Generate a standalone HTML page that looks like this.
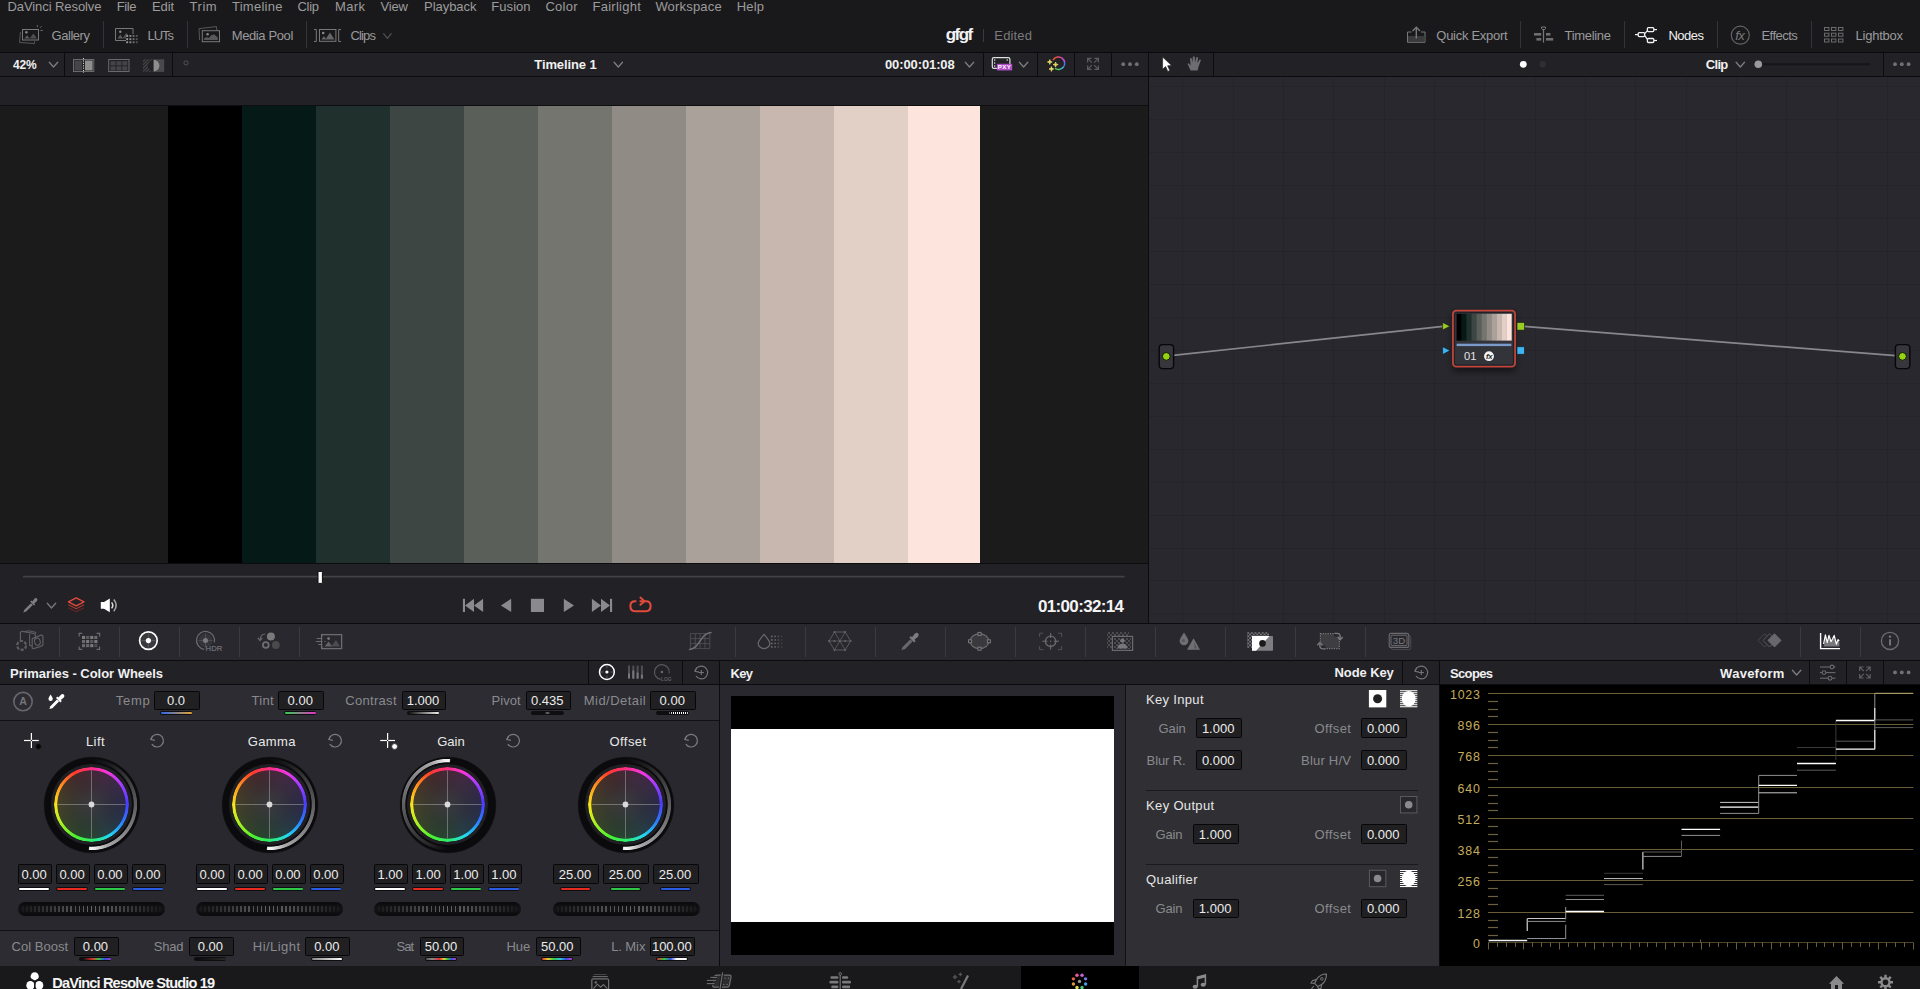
<!DOCTYPE html><html><head><meta charset="utf-8"><title>DaVinci Resolve</title><style>
*{box-sizing:border-box;margin:0;padding:0}
html,body{width:1920px;height:989px;overflow:hidden;background:#28282e}
body{position:relative;font-family:"Liberation Sans",sans-serif;color:#929292;font-size:13px;-webkit-font-smoothing:antialiased}
.abs{position:absolute}
.t{position:absolute;white-space:nowrap;line-height:1}
.w{color:#fff}
.b{font-weight:bold}
svg{position:absolute;overflow:visible}
.vsep{position:absolute;width:1px;background:#3a3a40}
.fld{position:absolute;background:#202022;border:1px solid #070709;border-radius:1.5px;color:#f0f0f0;text-align:center;font-size:13px;line-height:17px;height:19px}
.lbl{position:absolute;white-space:nowrap;color:#8c8c90;font-size:13px;line-height:1}
.bar{position:absolute;height:3px;border-radius:2px}
</style></head><body><div class="abs" style="left:0px;top:0px;width:1920px;height:52px;background:#19191b;"></div><div class="abs" style="left:0px;top:52px;width:1920px;height:1px;background:#0a0a0b;"></div><div class="abs" style="left:0px;top:53px;width:1148px;height:23px;background:#212126;"></div><div class="abs" style="left:0px;top:76px;width:1148px;height:1px;background:#0c0c0e;"></div><div class="abs" style="left:0px;top:77px;width:1148px;height:28px;background:#212126;"></div><div class="abs" style="left:0px;top:105px;width:1148px;height:1px;background:#0e0e10;"></div><div class="abs" style="left:0px;top:106px;width:1148px;height:457px;background:#1b1b1b;"></div><div class="abs" style="left:0px;top:563px;width:1148px;height:1px;background:#0c0c0e;"></div><div class="abs" style="left:0px;top:564px;width:1148px;height:59px;background:#212126;"></div><div class="abs" style="left:1148px;top:53px;width:1px;height:570px;background:#0c0c0e;"></div><div class="abs" style="left:1149px;top:53px;width:771px;height:23px;background:#212126;"></div><div class="abs" style="left:1149px;top:76px;width:771px;height:1px;background:#0c0c0e;"></div><div class="abs" style="left:1149px;top:77px;width:771px;height:546px;background:#28282e;"></div><div class="abs" style="left:0px;top:623px;width:1920px;height:1px;background:#0c0c0e;"></div><div class="abs" style="left:0px;top:624px;width:1920px;height:36px;background:#28282e;"></div><div class="abs" style="left:0px;top:660px;width:1920px;height:1px;background:#0c0c0e;"></div><div class="abs" style="left:0px;top:661px;width:1920px;height:23px;background:#212126;"></div><div class="abs" style="left:0px;top:684px;width:1920px;height:1px;background:#0c0c0e;"></div><div class="abs" style="left:0px;top:966px;width:1920px;height:23px;background:#19191b;"></div><span class="t" style="left:7.50px;top:-0.00px;font-size:13px;color:#9c9c9c;letter-spacing:-0.082px;">DaVinci Resolve</span><span class="t" style="left:116.70px;top:-0.00px;font-size:13px;color:#9c9c9c;letter-spacing:-0.383px;">File</span><span class="t" style="left:152.00px;top:-0.00px;font-size:13px;color:#9c9c9c;letter-spacing:-0.134px;">Edit</span><span class="t" style="left:189.60px;top:-0.00px;font-size:13px;color:#9c9c9c;letter-spacing:0.531px;">Trim</span><span class="t" style="left:231.90px;top:-0.00px;font-size:13px;color:#9c9c9c;letter-spacing:0.279px;">Timeline</span><span class="t" style="left:297.50px;top:-0.00px;font-size:13px;color:#9c9c9c;letter-spacing:-0.299px;">Clip</span><span class="t" style="left:335.00px;top:-0.00px;font-size:13px;color:#9c9c9c;letter-spacing:0.370px;">Mark</span><span class="t" style="left:380.40px;top:-0.00px;font-size:13px;color:#9c9c9c;letter-spacing:-0.115px;">View</span><span class="t" style="left:424.00px;top:-0.00px;font-size:13px;color:#9c9c9c;letter-spacing:-0.036px;">Playback</span><span class="t" style="left:491.30px;top:-0.00px;font-size:13px;color:#9c9c9c;letter-spacing:0.056px;">Fusion</span><span class="t" style="left:545.40px;top:-0.00px;font-size:13px;color:#9c9c9c;letter-spacing:0.258px;">Color</span><span class="t" style="left:592.50px;top:-0.00px;font-size:13px;color:#9c9c9c;letter-spacing:0.257px;">Fairlight</span><span class="t" style="left:655.40px;top:-0.00px;font-size:13px;color:#9c9c9c;letter-spacing:0.189px;">Workspace</span><span class="t" style="left:736.70px;top:-0.00px;font-size:13px;color:#9c9c9c;letter-spacing:0.187px;">Help</span><span class="t" style="left:51.50px;top:29.00px;font-size:13px;color:#9a9a9c;letter-spacing:-0.447px;">Gallery</span><span class="t" style="left:147.50px;top:29.00px;font-size:13px;color:#9a9a9c;letter-spacing:-1.040px;">LUTs</span><span class="t" style="left:231.70px;top:29.00px;font-size:13px;color:#9a9a9c;letter-spacing:-0.383px;">Media Pool</span><span class="t" style="left:350.40px;top:29.00px;font-size:13px;color:#9a9a9c;letter-spacing:-0.824px;">Clips</span><div class="vsep" style="left:103px;top:21px;height:27px;background:#333338"></div><div class="vsep" style="left:187px;top:21px;height:27px;background:#333338"></div><div class="vsep" style="left:306px;top:21px;height:27px;background:#333338"></div><span class="t" style="left:945.70px;top:25.61px;font-size:17px;color:#f2f2f2;font-weight:bold;letter-spacing:-1.498px;">gfgf</span><div class="vsep" style="left:983px;top:29px;height:13px;background:#3a3a3e"></div><span class="t" style="left:994.30px;top:29.00px;font-size:13px;color:#7a7a7c;letter-spacing:0.167px;">Edited</span><span class="t" style="left:1436.30px;top:29.00px;font-size:13px;color:#9a9a9c;letter-spacing:-0.283px;">Quick Export</span><span class="t" style="left:1564.50px;top:29.00px;font-size:13px;color:#9a9a9c;letter-spacing:-0.307px;">Timeline</span><span class="t" style="left:1668.40px;top:29.00px;font-size:13px;color:#f0f0f0;letter-spacing:-0.495px;">Nodes</span><span class="t" style="left:1761.40px;top:29.00px;font-size:13px;color:#9a9a9c;letter-spacing:-0.517px;">Effects</span><span class="t" style="left:1855.50px;top:29.00px;font-size:13px;color:#9a9a9c;letter-spacing:-0.236px;">Lightbox</span><div class="vsep" style="left:1520px;top:21px;height:27px;background:#333338"></div><div class="vsep" style="left:1624px;top:21px;height:27px;background:#333338"></div><div class="vsep" style="left:1717px;top:21px;height:27px;background:#333338"></div><div class="vsep" style="left:1811px;top:21px;height:27px;background:#333338"></div><span class="t" style="left:13.00px;top:58.54px;font-size:12px;color:#f0f0f0;font-weight:bold;letter-spacing:-0.159px;">42%</span><div class="vsep" style="left:64px;top:53px;height:23px;background:#0c0c0e"></div><div class="vsep" style="left:172px;top:53px;height:23px;background:#0c0c0e"></div><span class="t" style="left:534.30px;top:57.70px;font-size:13px;color:#f0f0f0;font-weight:bold;letter-spacing:-0.105px;">Timeline 1</span><span class="t" style="left:885.00px;top:57.70px;font-size:13px;color:#f0f0f0;font-weight:bold;letter-spacing:-0.113px;">00:00:01:08</span><div class="vsep" style="left:983px;top:53px;height:23px;background:#0c0c0e"></div><div class="vsep" style="left:1037px;top:53px;height:23px;background:#0c0c0e"></div><div class="vsep" style="left:1074px;top:53px;height:23px;background:#0c0c0e"></div><div class="vsep" style="left:1111px;top:53px;height:23px;background:#0c0c0e"></div><div class="vsep" style="left:1213px;top:53px;height:23px;background:#0c0c0e"></div><span class="t" style="left:1705.70px;top:57.70px;font-size:13px;color:#f0f0f0;font-weight:bold;letter-spacing:-0.651px;">Clip</span><div class="vsep" style="left:1883px;top:53px;height:23px;background:#0c0c0e"></div><div class="abs" style="left:168px;top:106px;width:74px;height:457px;background:#000000"></div><div class="abs" style="left:242px;top:106px;width:74px;height:457px;background:#051a17"></div><div class="abs" style="left:316px;top:106px;width:74px;height:457px;background:#20302c"></div><div class="abs" style="left:390px;top:106px;width:74px;height:457px;background:#3d4642"></div><div class="abs" style="left:464px;top:106px;width:74px;height:457px;background:#5a5f59"></div><div class="abs" style="left:538px;top:106px;width:74px;height:457px;background:#75756f"></div><div class="abs" style="left:612px;top:106px;width:74px;height:457px;background:#908c85"></div><div class="abs" style="left:686px;top:106px;width:74px;height:457px;background:#aba19b"></div><div class="abs" style="left:760px;top:106px;width:74px;height:457px;background:#c8b7af"></div><div class="abs" style="left:834px;top:106px;width:74px;height:457px;background:#e2d0c7"></div><div class="abs" style="left:908px;top:106px;width:72px;height:457px;background:#fde4dc"></div><span class="t" style="left:1038.00px;top:597.61px;font-size:17px;color:#f4f4f4;font-weight:bold;letter-spacing:-0.663px;">01:00:32:14</span><div class="vsep" style="left:59px;top:627px;height:30px;background:#3a3a40"></div><div class="vsep" style="left:119px;top:627px;height:30px;background:#3a3a40"></div><div class="vsep" style="left:179px;top:627px;height:30px;background:#3a3a40"></div><div class="vsep" style="left:239px;top:627px;height:30px;background:#3a3a40"></div><div class="vsep" style="left:299px;top:627px;height:30px;background:#3a3a40"></div><div class="vsep" style="left:735px;top:627px;height:30px;background:#3a3a40"></div><div class="vsep" style="left:805px;top:627px;height:30px;background:#3a3a40"></div><div class="vsep" style="left:875px;top:627px;height:30px;background:#3a3a40"></div><div class="vsep" style="left:945px;top:627px;height:30px;background:#3a3a40"></div><div class="vsep" style="left:1015px;top:627px;height:30px;background:#3a3a40"></div><div class="vsep" style="left:1085px;top:627px;height:30px;background:#3a3a40"></div><div class="vsep" style="left:1155px;top:627px;height:30px;background:#3a3a40"></div><div class="vsep" style="left:1225px;top:627px;height:30px;background:#3a3a40"></div><div class="vsep" style="left:1295px;top:627px;height:30px;background:#3a3a40"></div><div class="vsep" style="left:1365px;top:627px;height:30px;background:#3a3a40"></div><div class="vsep" style="left:1800px;top:627px;height:30px;background:#3a3a40"></div><div class="vsep" style="left:1860px;top:627px;height:30px;background:#3a3a40"></div><span class="t" style="left:10.00px;top:666.50px;font-size:13px;color:#f0f0f0;font-weight:bold;letter-spacing:-0.038px;">Primaries - Color Wheels</span><div class="vsep" style="left:588px;top:661px;height:23px;background:#0c0c0e"></div><div class="vsep" style="left:682px;top:661px;height:23px;background:#0c0c0e"></div><div class="abs" style="left:719px;top:661px;width:1px;height:305px;background:#0c0c0e;"></div><div class="abs" style="left:1439px;top:661px;width:1px;height:305px;background:#0c0c0e;"></div><div class="abs" style="left:0px;top:685px;width:719px;height:35px;background:#2c2c32;"></div><div class="abs" style="left:0px;top:720px;width:719px;height:1px;background:#111113;"></div><div class="abs" style="left:0px;top:721px;width:719px;height:209px;background:#28282e;"></div><div class="abs" style="left:0px;top:930px;width:719px;height:1px;background:#111113;"></div><div class="abs" style="left:0px;top:931px;width:719px;height:35px;background:#2c2c32;"></div><span class="t" style="left:115.80px;top:693.80px;font-size:13px;color:#8a8a8e;letter-spacing:0.703px;">Temp</span><div class="fld" style="left:154.2px;top:690.6px;width:45.5px;height:19.4px"></div><span class="t" style="left:167.01px;top:694.30px;font-size:13px;color:#ececec;">0.0</span><div class="bar" style="left:159.7px;top:711.4px;width:32.6px;height:3.5px;background:#0e0e10;border-radius:3px"></div><div class="bar" style="left:160.5px;top:712.2px;width:31.0px;height:1.9px;background:linear-gradient(90deg,#2a6ae8,#e8a030)"></div><span class="t" style="left:251.50px;top:693.80px;font-size:13px;color:#8a8a8e;letter-spacing:0.270px;">Tint</span><div class="fld" style="left:278.4px;top:690.6px;width:45.5px;height:19.4px"></div><span class="t" style="left:287.60px;top:694.30px;font-size:13px;color:#ececec;">0.00</span><div class="bar" style="left:283.9px;top:711.4px;width:32.6px;height:3.5px;background:#0e0e10;border-radius:3px"></div><div class="bar" style="left:284.8px;top:712.2px;width:31.0px;height:1.9px;background:linear-gradient(90deg,#30d050,#e830c8)"></div><span class="t" style="left:345.30px;top:693.80px;font-size:13px;color:#8a8a8e;letter-spacing:0.295px;">Contrast</span><div class="fld" style="left:401.5px;top:690.6px;width:44.9px;height:19.4px"></div><span class="t" style="left:406.78px;top:694.30px;font-size:13px;color:#ececec;">1.000</span><div class="bar" style="left:406.8px;top:711.4px;width:32.6px;height:3.5px;background:#0e0e10;border-radius:3px"></div><div class="bar" style="left:407.6px;top:712.2px;width:31.0px;height:1.9px;background:linear-gradient(90deg,#0a0a0a,#f0f0f0)"></div><span class="t" style="left:491.40px;top:693.80px;font-size:13px;color:#8a8a8e;letter-spacing:0.099px;">Pivot</span><div class="fld" style="left:525.7px;top:690.6px;width:44.9px;height:19.4px"></div><span class="t" style="left:530.98px;top:694.30px;font-size:13px;color:#ececec;">0.435</span><div class="bar" style="left:531.0px;top:711.4px;width:32.6px;height:3.5px;background:#0e0e10;border-radius:3px"></div><div class="bar" style="left:531.8px;top:712.2px;width:31.0px;height:1.9px;background:linear-gradient(90deg,#0e0e10 40%,#6a6a6a 50%,#0e0e10 60%)"></div><span class="t" style="left:583.80px;top:693.80px;font-size:13px;color:#8a8a8e;letter-spacing:0.445px;">Mid/Detail</span><div class="fld" style="left:650.3px;top:690.6px;width:45.7px;height:19.4px"></div><span class="t" style="left:659.60px;top:694.30px;font-size:13px;color:#ececec;">0.00</span><div class="bar" style="left:656.0px;top:711.4px;width:32.6px;height:3.5px;background:#0e0e10;border-radius:3px"></div><div class="bar" style="left:656.8px;top:712.2px;width:31.0px;height:1.9px;background:linear-gradient(90deg,#0e0e10 35%,rgba(0,0,0,0) 50%),repeating-linear-gradient(90deg,#fff 0 1px,#0e0e10 1px 2px)"></div><span class="t" style="left:11.60px;top:939.80px;font-size:13px;color:#8a8a8e;letter-spacing:0.030px;">Col Boost</span><div class="fld" style="left:73.9px;top:936.6px;width:44.9px;height:19.4px"></div><span class="t" style="left:82.80px;top:940.30px;font-size:13px;color:#ececec;">0.00</span><div class="bar" style="left:79.4px;top:957.3px;width:32.0px;height:3.5px;background:#0e0e10;border-radius:3px"></div><div class="bar" style="left:80.2px;top:958.1px;width:30.4px;height:1.9px;background:linear-gradient(90deg,#0e0e10 10%,#e03030 40%,#30c848 60%,#3050e0 80%,#a040d8 100%)"></div><span class="t" style="left:153.70px;top:939.80px;font-size:13px;color:#8a8a8e;letter-spacing:-0.154px;">Shad</span><div class="fld" style="left:189.0px;top:936.6px;width:44.5px;height:19.4px"></div><span class="t" style="left:197.70px;top:940.30px;font-size:13px;color:#ececec;">0.00</span><div class="bar" style="left:194.3px;top:957.3px;width:32.0px;height:3.5px;background:#0e0e10;border-radius:3px"></div><div class="bar" style="left:195.2px;top:958.1px;width:30.4px;height:1.9px;background:linear-gradient(90deg,#0a0a0a,#2a2a2a)"></div><span class="t" style="left:252.80px;top:939.80px;font-size:13px;color:#8a8a8e;letter-spacing:0.446px;">Hi/Light</span><div class="fld" style="left:305.4px;top:936.6px;width:44.6px;height:19.4px"></div><span class="t" style="left:314.15px;top:940.30px;font-size:13px;color:#ececec;">0.00</span><div class="bar" style="left:310.8px;top:957.3px;width:32.0px;height:3.5px;background:#0e0e10;border-radius:3px"></div><div class="bar" style="left:311.6px;top:958.1px;width:30.4px;height:1.9px;background:linear-gradient(90deg,#888,#fff)"></div><span class="t" style="left:396.50px;top:939.80px;font-size:13px;color:#8a8a8e;letter-spacing:-0.907px;">Sat</span><div class="fld" style="left:419.8px;top:936.6px;width:44.2px;height:19.4px"></div><span class="t" style="left:424.73px;top:940.30px;font-size:13px;color:#ececec;">50.00</span><div class="bar" style="left:425.0px;top:957.3px;width:32.0px;height:3.5px;background:#0e0e10;border-radius:3px"></div><div class="bar" style="left:425.8px;top:958.1px;width:30.4px;height:1.9px;background:linear-gradient(90deg,#555 0%,#888 20%,#e03030 45%,#e8d030 60%,#30c848 72%,#3050e0 86%,#d040d8 100%)"></div><span class="t" style="left:506.40px;top:939.80px;font-size:13px;color:#8a8a8e;letter-spacing:0.025px;">Hue</span><div class="fld" style="left:535.6px;top:936.6px;width:45.0px;height:19.4px"></div><span class="t" style="left:540.93px;top:940.30px;font-size:13px;color:#ececec;">50.00</span><div class="bar" style="left:541.2px;top:957.3px;width:32.0px;height:3.5px;background:#0e0e10;border-radius:3px"></div><div class="bar" style="left:542.0px;top:958.1px;width:30.4px;height:1.9px;background:linear-gradient(90deg,#e03030,#e8d030,#30c848,#30c8d8,#3050e0,#d040d8)"></div><span class="t" style="left:611.20px;top:939.80px;font-size:13px;color:#8a8a8e;letter-spacing:-0.094px;">L. Mix</span><div class="fld" style="left:650.1px;top:936.6px;width:45.2px;height:19.4px"></div><span class="t" style="left:651.92px;top:940.30px;font-size:13px;color:#ececec;">100.00</span><div class="bar" style="left:655.8px;top:957.3px;width:32.0px;height:3.5px;background:#0e0e10;border-radius:3px"></div><div class="bar" style="left:656.6px;top:958.1px;width:30.4px;height:1.9px;background:linear-gradient(90deg,#e03030 0%,#30c848 25%,#3050e0 45%,#fff 65%,#fff 100%)"></div><div class="abs" style="left:42.50px;top:755.50px;width:98.00px;height:98.00px;border-radius:50%;background:radial-gradient(circle closest-side,#0b0b0d 96.6%,rgba(11,11,13,0) 99.4%);"></div><div class="abs" style="left:45.10px;top:758.10px;width:92.80px;height:92.80px;border-radius:50%;background:conic-gradient(from 0deg,#0b0b0d 0deg,#1c1c1e 25deg,#4a4a4c 70deg,#7a7a7c 120deg,#a8a8aa 160deg,#f4f4f4 178deg,#f4f4f4 182.5deg,#0b0b0d 184deg,#0b0b0d 360deg);-webkit-mask:radial-gradient(circle closest-side,transparent 41.80px,#000 42.60px,#000 45.20px,transparent 46.00px);mask:radial-gradient(circle closest-side,transparent 41.80px,#000 42.60px,#000 45.20px,transparent 46.00px);"></div><div class="abs" style="left:50.90px;top:763.90px;width:81.20px;height:81.20px;border-radius:50%;background:#202024;"></div><div class="abs" style="left:56.90px;top:769.90px;width:69.20px;height:69.20px;border-radius:50%;background:radial-gradient(circle closest-side,#38383c 0%,rgba(50,50,54,0.55) 45%,rgba(40,40,44,0.35) 100%),conic-gradient(from 0deg,#ff2e86 0deg,#f436e0 28deg,#a83cff 55deg,#4a3cff 88deg,#2a7cff 118deg,#22d8f0 150deg,#2cf070 178deg,#48f030 205deg,#a8f020 238deg,#f8e818 268deg,#ff9a1c 298deg,#ff3a2c 332deg,#ff2e86 360deg);"></div><div class="abs" style="left:56.90px;top:769.90px;width:69.20px;height:69.20px;border-radius:50%;background:radial-gradient(circle closest-side,rgba(58,58,62,0.94) 0%,rgba(44,44,48,0.86) 55%,rgba(36,36,40,0.76) 100%);"></div><div class="abs" style="left:53.70px;top:766.70px;width:75.60px;height:75.60px;border-radius:50%;background:conic-gradient(from 0deg,#ff2e86 0deg,#f436e0 28deg,#a83cff 55deg,#4a3cff 88deg,#2a7cff 118deg,#22d8f0 150deg,#2cf070 178deg,#48f030 205deg,#a8f020 238deg,#f8e818 268deg,#ff9a1c 298deg,#ff3a2c 332deg,#ff2e86 360deg);-webkit-mask:radial-gradient(circle closest-side,transparent 33.80px,#000 34.60px,#000 37.30px,transparent 38.10px);mask:radial-gradient(circle closest-side,transparent 33.80px,#000 34.60px,#000 37.30px,transparent 38.10px);"></div><span class="t" style="left:86.00px;top:734.70px;font-size:13px;color:#e8e8e8;letter-spacing:0.386px;">Lift</span><div class="fld" style="left:18.3px;top:864.2px;width:33.5px;height:19.4px"></div><span class="t" style="left:21.50px;top:867.90px;font-size:13px;color:#ececec;">0.00</span><div class="bar" style="left:18.3px;top:887.1px;width:31.4px;height:3.8000000000000003px;background:#0e0e10;border-radius:3px"></div><div class="bar" style="left:19.1px;top:887.9px;width:29.8px;height:2.2px;background:#ffffff"></div><div class="fld" style="left:56.2px;top:864.2px;width:33.5px;height:19.4px"></div><span class="t" style="left:59.40px;top:867.90px;font-size:13px;color:#ececec;">0.00</span><div class="bar" style="left:56.2px;top:887.1px;width:31.4px;height:3.8000000000000003px;background:#0e0e10;border-radius:3px"></div><div class="bar" style="left:57.0px;top:887.9px;width:29.8px;height:2.2px;background:#e62a20"></div><div class="fld" style="left:94.1px;top:864.2px;width:33.5px;height:19.4px"></div><span class="t" style="left:97.30px;top:867.90px;font-size:13px;color:#ececec;">0.00</span><div class="bar" style="left:94.1px;top:887.1px;width:31.4px;height:3.8000000000000003px;background:#0e0e10;border-radius:3px"></div><div class="bar" style="left:94.9px;top:887.9px;width:29.8px;height:2.2px;background:#2ec848"></div><div class="fld" style="left:132.0px;top:864.2px;width:33.5px;height:19.4px"></div><span class="t" style="left:135.20px;top:867.90px;font-size:13px;color:#ececec;">0.00</span><div class="bar" style="left:132.0px;top:887.1px;width:31.4px;height:3.8000000000000003px;background:#0e0e10;border-radius:3px"></div><div class="bar" style="left:132.8px;top:887.9px;width:29.8px;height:2.2px;background:#2a5ce2"></div><div class="abs" style="left:18.1px;top:902px;width:146.6px;height:13.8px;border-radius:7px;background:linear-gradient(180deg,#0a0a0c,#141416 50%,#0a0a0c)"></div><div class="abs" style="left:22.1px;top:906.2px;width:138.6px;height:5.6px;background:repeating-linear-gradient(90deg,#666668 0 1.7px,transparent 1.7px 4.04px);-webkit-mask:linear-gradient(90deg,rgba(0,0,0,0.08),#000 50%,rgba(0,0,0,0.06));mask:linear-gradient(90deg,rgba(0,0,0,0.08),#000 50%,rgba(0,0,0,0.06))"></div><div class="abs" style="left:220.50px;top:755.50px;width:98.00px;height:98.00px;border-radius:50%;background:radial-gradient(circle closest-side,#0b0b0d 96.6%,rgba(11,11,13,0) 99.4%);"></div><div class="abs" style="left:223.10px;top:758.10px;width:92.80px;height:92.80px;border-radius:50%;background:conic-gradient(from 0deg,#0b0b0d 0deg,#1c1c1e 25deg,#4a4a4c 70deg,#7a7a7c 120deg,#a8a8aa 160deg,#f4f4f4 178deg,#f4f4f4 182.5deg,#0b0b0d 184deg,#0b0b0d 360deg);-webkit-mask:radial-gradient(circle closest-side,transparent 41.80px,#000 42.60px,#000 45.20px,transparent 46.00px);mask:radial-gradient(circle closest-side,transparent 41.80px,#000 42.60px,#000 45.20px,transparent 46.00px);"></div><div class="abs" style="left:228.90px;top:763.90px;width:81.20px;height:81.20px;border-radius:50%;background:#202024;"></div><div class="abs" style="left:234.90px;top:769.90px;width:69.20px;height:69.20px;border-radius:50%;background:radial-gradient(circle closest-side,#38383c 0%,rgba(50,50,54,0.55) 45%,rgba(40,40,44,0.35) 100%),conic-gradient(from 0deg,#ff2e86 0deg,#f436e0 28deg,#a83cff 55deg,#4a3cff 88deg,#2a7cff 118deg,#22d8f0 150deg,#2cf070 178deg,#48f030 205deg,#a8f020 238deg,#f8e818 268deg,#ff9a1c 298deg,#ff3a2c 332deg,#ff2e86 360deg);"></div><div class="abs" style="left:234.90px;top:769.90px;width:69.20px;height:69.20px;border-radius:50%;background:radial-gradient(circle closest-side,rgba(58,58,62,0.94) 0%,rgba(44,44,48,0.86) 55%,rgba(36,36,40,0.76) 100%);"></div><div class="abs" style="left:231.70px;top:766.70px;width:75.60px;height:75.60px;border-radius:50%;background:conic-gradient(from 0deg,#ff2e86 0deg,#f436e0 28deg,#a83cff 55deg,#4a3cff 88deg,#2a7cff 118deg,#22d8f0 150deg,#2cf070 178deg,#48f030 205deg,#a8f020 238deg,#f8e818 268deg,#ff9a1c 298deg,#ff3a2c 332deg,#ff2e86 360deg);-webkit-mask:radial-gradient(circle closest-side,transparent 33.80px,#000 34.60px,#000 37.30px,transparent 38.10px);mask:radial-gradient(circle closest-side,transparent 33.80px,#000 34.60px,#000 37.30px,transparent 38.10px);"></div><span class="t" style="left:247.80px;top:734.70px;font-size:13px;color:#e8e8e8;letter-spacing:0.342px;">Gamma</span><div class="fld" style="left:196.3px;top:864.2px;width:33.5px;height:19.4px"></div><span class="t" style="left:199.50px;top:867.90px;font-size:13px;color:#ececec;">0.00</span><div class="bar" style="left:196.3px;top:887.1px;width:31.4px;height:3.8000000000000003px;background:#0e0e10;border-radius:3px"></div><div class="bar" style="left:197.1px;top:887.9px;width:29.8px;height:2.2px;background:#ffffff"></div><div class="fld" style="left:234.2px;top:864.2px;width:33.5px;height:19.4px"></div><span class="t" style="left:237.40px;top:867.90px;font-size:13px;color:#ececec;">0.00</span><div class="bar" style="left:234.2px;top:887.1px;width:31.4px;height:3.8000000000000003px;background:#0e0e10;border-radius:3px"></div><div class="bar" style="left:235.0px;top:887.9px;width:29.8px;height:2.2px;background:#e62a20"></div><div class="fld" style="left:272.1px;top:864.2px;width:33.5px;height:19.4px"></div><span class="t" style="left:275.30px;top:867.90px;font-size:13px;color:#ececec;">0.00</span><div class="bar" style="left:272.1px;top:887.1px;width:31.4px;height:3.8000000000000003px;background:#0e0e10;border-radius:3px"></div><div class="bar" style="left:272.9px;top:887.9px;width:29.8px;height:2.2px;background:#2ec848"></div><div class="fld" style="left:310.0px;top:864.2px;width:33.5px;height:19.4px"></div><span class="t" style="left:313.20px;top:867.90px;font-size:13px;color:#ececec;">0.00</span><div class="bar" style="left:310.0px;top:887.1px;width:31.4px;height:3.8000000000000003px;background:#0e0e10;border-radius:3px"></div><div class="bar" style="left:310.8px;top:887.9px;width:29.8px;height:2.2px;background:#2a5ce2"></div><div class="abs" style="left:196.1px;top:902px;width:146.6px;height:13.8px;border-radius:7px;background:linear-gradient(180deg,#0a0a0c,#141416 50%,#0a0a0c)"></div><div class="abs" style="left:200.1px;top:906.2px;width:138.6px;height:5.6px;background:repeating-linear-gradient(90deg,#666668 0 1.7px,transparent 1.7px 4.04px);-webkit-mask:linear-gradient(90deg,rgba(0,0,0,0.08),#000 50%,rgba(0,0,0,0.06));mask:linear-gradient(90deg,rgba(0,0,0,0.08),#000 50%,rgba(0,0,0,0.06))"></div><div class="abs" style="left:398.50px;top:755.50px;width:98.00px;height:98.00px;border-radius:50%;background:radial-gradient(circle closest-side,#0b0b0d 96.6%,rgba(11,11,13,0) 99.4%);"></div><div class="abs" style="left:401.10px;top:758.10px;width:92.80px;height:92.80px;border-radius:50%;background:conic-gradient(from 180deg,#0b0b0d 0deg,#262628 25deg,#4e4e50 70deg,#7a7a7c 120deg,#a8a8aa 160deg,#f4f4f4 178deg,#f4f4f4 182.5deg,#0b0b0d 184deg,#0b0b0d 360deg);-webkit-mask:radial-gradient(circle closest-side,transparent 41.80px,#000 42.60px,#000 45.20px,transparent 46.00px);mask:radial-gradient(circle closest-side,transparent 41.80px,#000 42.60px,#000 45.20px,transparent 46.00px);"></div><div class="abs" style="left:406.90px;top:763.90px;width:81.20px;height:81.20px;border-radius:50%;background:#202024;"></div><div class="abs" style="left:412.90px;top:769.90px;width:69.20px;height:69.20px;border-radius:50%;background:radial-gradient(circle closest-side,#38383c 0%,rgba(50,50,54,0.55) 45%,rgba(40,40,44,0.35) 100%),conic-gradient(from 0deg,#ff2e86 0deg,#f436e0 28deg,#a83cff 55deg,#4a3cff 88deg,#2a7cff 118deg,#22d8f0 150deg,#2cf070 178deg,#48f030 205deg,#a8f020 238deg,#f8e818 268deg,#ff9a1c 298deg,#ff3a2c 332deg,#ff2e86 360deg);"></div><div class="abs" style="left:412.90px;top:769.90px;width:69.20px;height:69.20px;border-radius:50%;background:radial-gradient(circle closest-side,rgba(58,58,62,0.94) 0%,rgba(44,44,48,0.86) 55%,rgba(36,36,40,0.76) 100%);"></div><div class="abs" style="left:409.70px;top:766.70px;width:75.60px;height:75.60px;border-radius:50%;background:conic-gradient(from 0deg,#ff2e86 0deg,#f436e0 28deg,#a83cff 55deg,#4a3cff 88deg,#2a7cff 118deg,#22d8f0 150deg,#2cf070 178deg,#48f030 205deg,#a8f020 238deg,#f8e818 268deg,#ff9a1c 298deg,#ff3a2c 332deg,#ff2e86 360deg);-webkit-mask:radial-gradient(circle closest-side,transparent 33.80px,#000 34.60px,#000 37.30px,transparent 38.10px);mask:radial-gradient(circle closest-side,transparent 33.80px,#000 34.60px,#000 37.30px,transparent 38.10px);"></div><span class="t" style="left:437.20px;top:734.70px;font-size:13px;color:#e8e8e8;letter-spacing:0.046px;">Gain</span><div class="fld" style="left:374.3px;top:864.2px;width:33.5px;height:19.4px"></div><span class="t" style="left:377.50px;top:867.90px;font-size:13px;color:#ececec;">1.00</span><div class="bar" style="left:374.3px;top:887.1px;width:31.4px;height:3.8000000000000003px;background:#0e0e10;border-radius:3px"></div><div class="bar" style="left:375.1px;top:887.9px;width:29.8px;height:2.2px;background:#ffffff"></div><div class="fld" style="left:412.2px;top:864.2px;width:33.5px;height:19.4px"></div><span class="t" style="left:415.40px;top:867.90px;font-size:13px;color:#ececec;">1.00</span><div class="bar" style="left:412.2px;top:887.1px;width:31.4px;height:3.8000000000000003px;background:#0e0e10;border-radius:3px"></div><div class="bar" style="left:413.0px;top:887.9px;width:29.8px;height:2.2px;background:#e62a20"></div><div class="fld" style="left:450.1px;top:864.2px;width:33.5px;height:19.4px"></div><span class="t" style="left:453.30px;top:867.90px;font-size:13px;color:#ececec;">1.00</span><div class="bar" style="left:450.1px;top:887.1px;width:31.4px;height:3.8000000000000003px;background:#0e0e10;border-radius:3px"></div><div class="bar" style="left:450.9px;top:887.9px;width:29.8px;height:2.2px;background:#2ec848"></div><div class="fld" style="left:488.0px;top:864.2px;width:33.5px;height:19.4px"></div><span class="t" style="left:491.20px;top:867.90px;font-size:13px;color:#ececec;">1.00</span><div class="bar" style="left:488.0px;top:887.1px;width:31.4px;height:3.8000000000000003px;background:#0e0e10;border-radius:3px"></div><div class="bar" style="left:488.8px;top:887.9px;width:29.8px;height:2.2px;background:#2a5ce2"></div><div class="abs" style="left:374.1px;top:902px;width:146.6px;height:13.8px;border-radius:7px;background:linear-gradient(180deg,#0a0a0c,#141416 50%,#0a0a0c)"></div><div class="abs" style="left:378.1px;top:906.2px;width:138.6px;height:5.6px;background:repeating-linear-gradient(90deg,#666668 0 1.7px,transparent 1.7px 4.04px);-webkit-mask:linear-gradient(90deg,rgba(0,0,0,0.08),#000 50%,rgba(0,0,0,0.06));mask:linear-gradient(90deg,rgba(0,0,0,0.08),#000 50%,rgba(0,0,0,0.06))"></div><div class="abs" style="left:576.50px;top:755.50px;width:98.00px;height:98.00px;border-radius:50%;background:radial-gradient(circle closest-side,#0b0b0d 96.6%,rgba(11,11,13,0) 99.4%);"></div><div class="abs" style="left:579.10px;top:758.10px;width:92.80px;height:92.80px;border-radius:50%;background:conic-gradient(from 0deg,#0b0b0d 0deg,#1c1c1e 25deg,#4a4a4c 70deg,#7a7a7c 120deg,#a8a8aa 160deg,#f4f4f4 178deg,#f4f4f4 182.5deg,#0b0b0d 184deg,#0b0b0d 360deg);-webkit-mask:radial-gradient(circle closest-side,transparent 41.80px,#000 42.60px,#000 45.20px,transparent 46.00px);mask:radial-gradient(circle closest-side,transparent 41.80px,#000 42.60px,#000 45.20px,transparent 46.00px);"></div><div class="abs" style="left:584.90px;top:763.90px;width:81.20px;height:81.20px;border-radius:50%;background:#202024;"></div><div class="abs" style="left:590.90px;top:769.90px;width:69.20px;height:69.20px;border-radius:50%;background:radial-gradient(circle closest-side,#38383c 0%,rgba(50,50,54,0.55) 45%,rgba(40,40,44,0.35) 100%),conic-gradient(from 0deg,#ff2e86 0deg,#f436e0 28deg,#a83cff 55deg,#4a3cff 88deg,#2a7cff 118deg,#22d8f0 150deg,#2cf070 178deg,#48f030 205deg,#a8f020 238deg,#f8e818 268deg,#ff9a1c 298deg,#ff3a2c 332deg,#ff2e86 360deg);"></div><div class="abs" style="left:590.90px;top:769.90px;width:69.20px;height:69.20px;border-radius:50%;background:radial-gradient(circle closest-side,rgba(58,58,62,0.94) 0%,rgba(44,44,48,0.86) 55%,rgba(36,36,40,0.76) 100%);"></div><div class="abs" style="left:587.70px;top:766.70px;width:75.60px;height:75.60px;border-radius:50%;background:conic-gradient(from 0deg,#ff2e86 0deg,#f436e0 28deg,#a83cff 55deg,#4a3cff 88deg,#2a7cff 118deg,#22d8f0 150deg,#2cf070 178deg,#48f030 205deg,#a8f020 238deg,#f8e818 268deg,#ff9a1c 298deg,#ff3a2c 332deg,#ff2e86 360deg);-webkit-mask:radial-gradient(circle closest-side,transparent 33.80px,#000 34.60px,#000 37.30px,transparent 38.10px);mask:radial-gradient(circle closest-side,transparent 33.80px,#000 34.60px,#000 37.30px,transparent 38.10px);"></div><span class="t" style="left:609.50px;top:734.70px;font-size:13px;color:#e8e8e8;letter-spacing:0.432px;">Offset</span><div class="fld" style="left:553.3px;top:864.2px;width:45.3px;height:19.4px"></div><span class="t" style="left:558.78px;top:867.90px;font-size:13px;color:#ececec;">25.00</span><div class="bar" style="left:559.7px;top:887.1px;width:31.4px;height:3.8000000000000003px;background:#0e0e10;border-radius:3px"></div><div class="bar" style="left:560.5px;top:887.9px;width:29.8px;height:2.2px;background:#e62a20"></div><div class="fld" style="left:603.3px;top:864.2px;width:45.3px;height:19.4px"></div><span class="t" style="left:608.78px;top:867.90px;font-size:13px;color:#ececec;">25.00</span><div class="bar" style="left:609.7px;top:887.1px;width:31.4px;height:3.8000000000000003px;background:#0e0e10;border-radius:3px"></div><div class="bar" style="left:610.5px;top:887.9px;width:29.8px;height:2.2px;background:#2ec848"></div><div class="fld" style="left:653.3px;top:864.2px;width:45.3px;height:19.4px"></div><span class="t" style="left:658.78px;top:867.90px;font-size:13px;color:#ececec;">25.00</span><div class="bar" style="left:659.7px;top:887.1px;width:31.4px;height:3.8000000000000003px;background:#0e0e10;border-radius:3px"></div><div class="bar" style="left:660.5px;top:887.9px;width:29.8px;height:2.2px;background:#2a5ce2"></div><div class="abs" style="left:553.3px;top:902px;width:146.6px;height:13.8px;border-radius:7px;background:linear-gradient(180deg,#0a0a0c,#141416 50%,#0a0a0c)"></div><div class="abs" style="left:557.3px;top:906.2px;width:138.6px;height:5.6px;background:repeating-linear-gradient(90deg,#666668 0 1.7px,transparent 1.7px 4.04px);-webkit-mask:linear-gradient(90deg,rgba(0,0,0,0.08),#000 50%,rgba(0,0,0,0.06));mask:linear-gradient(90deg,rgba(0,0,0,0.08),#000 50%,rgba(0,0,0,0.06))"></div><span class="t" style="left:730.60px;top:666.50px;font-size:13px;color:#f0f0f0;font-weight:bold;letter-spacing:-0.775px;">Key</span><span class="t" style="left:1334.60px;top:665.70px;font-size:13px;color:#f0f0f0;font-weight:bold;letter-spacing:-0.109px;">Node Key</span><div class="vsep" style="left:1402px;top:661px;height:23px;background:#0c0c0e"></div><div class="abs" style="left:720px;top:685px;width:405px;height:281px;background:#28282e;"></div><div class="abs" style="left:1125px;top:685px;width:1px;height:281px;background:#111113;"></div><div class="abs" style="left:1126px;top:685px;width:313px;height:281px;background:#2f2f34;"></div><div class="abs" style="left:731px;top:696px;width:383px;height:259px;background:#000;"></div><div class="abs" style="left:731px;top:729.3px;width:383px;height:192.4px;background:#fff;"></div><span class="t" style="left:1146.10px;top:692.80px;font-size:13px;color:#e6e6e6;letter-spacing:0.309px;">Key Input</span><span class="t" style="left:1158.60px;top:721.80px;font-size:13px;color:#8a8a8e;letter-spacing:-0.120px;">Gain</span><div class="fld" style="left:1196.2px;top:718.3px;width:45.7px;height:19.4px"></div><span class="t" style="left:1201.88px;top:722.00px;font-size:13px;color:#ececec;">1.000</span><span class="t" style="left:1314.40px;top:721.80px;font-size:13px;color:#8a8a8e;letter-spacing:0.412px;">Offset</span><div class="fld" style="left:1361.2px;top:718.3px;width:45.7px;height:19.4px"></div><span class="t" style="left:1366.88px;top:722.00px;font-size:13px;color:#ececec;">0.000</span><span class="t" style="left:1146.60px;top:753.80px;font-size:13px;color:#8a8a8e;letter-spacing:-0.105px;">Blur R.</span><div class="fld" style="left:1196.2px;top:750.3px;width:45.7px;height:19.4px"></div><span class="t" style="left:1201.88px;top:754.00px;font-size:13px;color:#ececec;">0.000</span><span class="t" style="left:1301.10px;top:753.80px;font-size:13px;color:#8a8a8e;letter-spacing:0.199px;">Blur H/V</span><div class="fld" style="left:1361.2px;top:750.3px;width:45.7px;height:19.4px"></div><span class="t" style="left:1366.88px;top:754.00px;font-size:13px;color:#ececec;">0.000</span><div class="abs" style="left:1146px;top:790px;width:272px;height:1px;background:#1a1a1c;"></div><span class="t" style="left:1146.10px;top:798.70px;font-size:13px;color:#e6e6e6;letter-spacing:0.329px;">Key Output</span><span class="t" style="left:1155.60px;top:827.60px;font-size:13px;color:#8a8a8e;letter-spacing:-0.187px;">Gain</span><div class="fld" style="left:1193.2px;top:824.4px;width:45.6px;height:19.4px"></div><span class="t" style="left:1198.83px;top:828.10px;font-size:13px;color:#ececec;">1.000</span><span class="t" style="left:1314.40px;top:827.60px;font-size:13px;color:#8a8a8e;letter-spacing:0.412px;">Offset</span><div class="fld" style="left:1361.2px;top:824.4px;width:45.7px;height:19.4px"></div><span class="t" style="left:1366.88px;top:828.10px;font-size:13px;color:#ececec;">0.000</span><div class="abs" style="left:1146px;top:864px;width:272px;height:1px;background:#1a1a1c;"></div><span class="t" style="left:1146.10px;top:872.60px;font-size:13px;color:#e6e6e6;letter-spacing:0.374px;">Qualifier</span><span class="t" style="left:1155.60px;top:901.80px;font-size:13px;color:#8a8a8e;letter-spacing:-0.187px;">Gain</span><div class="fld" style="left:1193.2px;top:898.6px;width:45.6px;height:19.4px"></div><span class="t" style="left:1198.83px;top:902.30px;font-size:13px;color:#ececec;">1.000</span><span class="t" style="left:1314.40px;top:901.80px;font-size:13px;color:#8a8a8e;letter-spacing:0.412px;">Offset</span><div class="fld" style="left:1361.2px;top:898.6px;width:45.7px;height:19.4px"></div><span class="t" style="left:1366.88px;top:902.30px;font-size:13px;color:#ececec;">0.000</span><span class="t" style="left:1450.00px;top:666.50px;font-size:13px;color:#f0f0f0;font-weight:bold;letter-spacing:-0.649px;">Scopes</span><span class="t" style="left:1720.10px;top:666.50px;font-size:13px;color:#f0f0f0;font-weight:bold;letter-spacing:0.262px;">Waveform</span><div class="vsep" style="left:1809px;top:661px;height:23px;background:#0c0c0e"></div><div class="vsep" style="left:1846px;top:661px;height:23px;background:#0c0c0e"></div><div class="vsep" style="left:1883px;top:661px;height:23px;background:#0c0c0e"></div><div class="abs" style="left:1440px;top:685px;width:480px;height:281px;background:#000;"></div><span class="t" style="left:1449.94px;top:688.90px;font-size:12.4px;color:#c4ac5c;letter-spacing:0.827px;">1023</span><span class="t" style="left:1457.45px;top:719.90px;font-size:12.4px;color:#c4ac5c;letter-spacing:0.931px;">896</span><span class="t" style="left:1457.45px;top:750.90px;font-size:12.4px;color:#c4ac5c;letter-spacing:0.931px;">768</span><span class="t" style="left:1457.45px;top:782.90px;font-size:12.4px;color:#c4ac5c;letter-spacing:0.931px;">640</span><span class="t" style="left:1457.45px;top:813.90px;font-size:12.4px;color:#c4ac5c;letter-spacing:0.931px;">512</span><span class="t" style="left:1457.45px;top:844.90px;font-size:12.4px;color:#c4ac5c;letter-spacing:0.931px;">384</span><span class="t" style="left:1457.45px;top:875.90px;font-size:12.4px;color:#c4ac5c;letter-spacing:0.931px;">256</span><span class="t" style="left:1457.45px;top:907.90px;font-size:12.4px;color:#c4ac5c;letter-spacing:0.931px;">128</span><span class="t" style="left:1473.11px;top:937.90px;font-size:12.4px;color:#c4ac5c;">0</span><div class="abs" style="left:1021px;top:966px;width:118px;height:23px;background:#000;"></div><span class="t" style="left:52.30px;top:976.04px;font-size:14.6px;color:#f4f4f4;font-weight:bold;letter-spacing:-0.837px;">DaVinci Resolve Studio 19</span><svg width="1920" height="989" viewBox="0 0 1920 989" style="left:0;top:0" font-family="Liberation Sans, sans-serif"><path d="M20.5 32 L19.5 42.5 L34.5 43.5 L34.6 41.2" fill="none" stroke="#565656" stroke-width="1" />
<rect x="22.5" y="29.5" width="16" height="10.5" fill="none" stroke="#787878" stroke-width="1" rx="0" />
<circle cx="26.4" cy="32.3" r="1.2" fill="#8a8a8a" stroke="none" stroke-width="1" />
<path d="M24.3 38.6 L27 35.3 L29.8 38.6 Z" fill="#5c5c5c" stroke="none" stroke-width="0" />
<path d="M29.6 38.6 L33.4 33.6 L37 38.6 Z" fill="#4e4e4e" stroke="none" stroke-width="0" />
<line x1="37.4" y1="25" x2="37.4" y2="27.2" stroke="#6a6a6a" stroke-width="1" />
<line x1="40" y1="27.8" x2="41.6" y2="26.2" stroke="#6a6a6a" stroke-width="1" />
<line x1="40.4" y1="30.5" x2="42.8" y2="30.5" stroke="#6a6a6a" stroke-width="1" />
<path d="M126 40.5 L115.5 40.5 L115.5 28.5 L133 28.5 L133 34" fill="none" stroke="#787878" stroke-width="1" />
<circle cx="120.3" cy="31.8" r="1.2" fill="#8a8a8a" stroke="none" stroke-width="1" />
<path d="M117.6 38.6 L120.3 34.6 L123 38.6 Z" fill="#5c5c5c" stroke="none" stroke-width="0" />
<path d="M122.4 38.6 L126.3 32.8 L128 35 L126 35 L126 38.6Z" fill="#4e4e4e" stroke="none" stroke-width="0" />
<rect x="126.2" y="35" width="1.9" height="1.9" fill="#9a9a9a" rx="0" />
<rect x="129.4" y="35" width="1.9" height="1.9" fill="#8a8a8a" rx="0" />
<rect x="132.6" y="35" width="1.9" height="1.9" fill="#6e6e6e" rx="0" />
<rect x="135.8" y="35" width="1.9" height="1.9" fill="#555" rx="0" />
<rect x="126.2" y="38.2" width="1.9" height="1.9" fill="#9a9a9a" rx="0" />
<rect x="129.4" y="38.2" width="1.9" height="1.9" fill="#8a8a8a" rx="0" />
<rect x="132.6" y="38.2" width="1.9" height="1.9" fill="#6e6e6e" rx="0" />
<rect x="135.8" y="38.2" width="1.9" height="1.9" fill="#555" rx="0" />
<rect x="126.2" y="41.3" width="1.9" height="1.9" fill="#9a9a9a" rx="0" />
<rect x="129.4" y="41.3" width="1.9" height="1.9" fill="#8a8a8a" rx="0" />
<rect x="132.6" y="41.3" width="1.9" height="1.9" fill="#6e6e6e" rx="0" />
<rect x="135.8" y="41.3" width="1.9" height="1.9" fill="#555" rx="0" />
<path d="M199.6 40 L199 28.6 L216.4 26.6 L216.8 30" fill="none" stroke="#565656" stroke-width="1" />
<rect x="202.3" y="30.7" width="17.2" height="11" fill="none" stroke="#787878" stroke-width="1" rx="0" />
<circle cx="207.6" cy="34.3" r="1.2" fill="#8a8a8a" stroke="none" stroke-width="1" />
<path d="M204 40 L204 38.6 Q206.5 36.2 208.8 38 Q212 33.6 214.6 34.8 L217.8 37.6 L217.8 40 Z" fill="#585858" stroke="none" stroke-width="0" />
<path d="M314 29.5 L316.3 29.5 L316.3 41.5 L314 41.5" fill="none" stroke="#787878" stroke-width="1" />
<path d="M341 29.5 L338.7 29.5 L338.7 41.5 L341 41.5" fill="none" stroke="#787878" stroke-width="1" />
<rect x="319.5" y="29.5" width="16.4" height="11.8" fill="none" stroke="#787878" stroke-width="1" rx="0" />
<circle cx="323.2" cy="33" r="1.3" fill="#8a8a8a" stroke="none" stroke-width="1" />
<path d="M321.4 39.6 L324 36 L326.2 39.6 Z" fill="#666" stroke="none" stroke-width="0" />
<path d="M325.4 39.6 L330 32.4 L334.4 39.6 Z" fill="#666" stroke="none" stroke-width="0" />
<path d="M383.59999999999997 33.7 L387.4 38.3 L391.2 33.7" fill="none" stroke="#4e4e50" stroke-width="1.3" stroke-linecap="round" stroke-linejoin="round"/>
<path d="M1411.5 32 L1407.5 32 L1407.5 42.3 L1425 42.3 L1425 32 L1421 32" fill="none" stroke="#787878" stroke-width="1" />
<rect x="1408" y="36" width="16.5" height="6" fill="#3a3a3c" rx="0" />
<line x1="1416.3" y1="28" x2="1416.3" y2="38.5" stroke="#787878" stroke-width="1.4" />
<path d="M1412.6 31 L1416.3 27.3 L1420 31" fill="none" stroke="#787878" stroke-width="1.4" />
<line x1="1543.5" y1="29" x2="1543.5" y2="42.6" stroke="#787878" stroke-width="1.2" />
<path d="M1541.5 27 L1545.5 27 L1545.5 28.6 L1543.5 30.4 L1541.5 28.6 Z" fill="none" stroke="#787878" stroke-width="1" />
<rect x="1534" y="33" width="7.2" height="2.6" fill="#6e6e6e" rx="0" />
<rect x="1546" y="33" width="4.4" height="2.6" fill="#6e6e6e" rx="0" />
<rect x="1536.4" y="38" width="4.8" height="2.6" fill="#6e6e6e" rx="0" />
<rect x="1546" y="38" width="7.2" height="2.6" fill="#6e6e6e" rx="0" />
<rect x="1638.2" y="32.6" width="6.4" height="4" fill="none" stroke="#f2f2f2" stroke-width="1.3" rx="1" />
<rect x="1647.4" y="27.6" width="6.4" height="4" fill="none" stroke="#f2f2f2" stroke-width="1.3" rx="1" />
<rect x="1647.4" y="38.5" width="6.4" height="4" fill="none" stroke="#f2f2f2" stroke-width="1.3" rx="1" />
<line x1="1635" y1="34.6" x2="1638" y2="34.6" stroke="#f2f2f2" stroke-width="1.2" />
<line x1="1654" y1="29.6" x2="1657" y2="29.6" stroke="#f2f2f2" stroke-width="1.2" />
<line x1="1654" y1="40.5" x2="1657" y2="40.5" stroke="#f2f2f2" stroke-width="1.2" />
<path d="M1644.8 33.6 L1647.2 30.8 M1644.8 35.6 L1647.2 39.2" fill="none" stroke="#f2f2f2" stroke-width="1.2" />
<circle cx="1740.3" cy="35.2" r="9" fill="none" stroke="#626264" stroke-width="1.2" />
<text x="1735.2" y="39.6" font-size="13" font-style="italic" fill="#7a7a7c" letter-spacing="-0.6">fx</text>
<rect x="1824.5" y="27.5" width="4.4" height="3" fill="none" stroke="#6c6c6e" stroke-width="1" rx="0" />
<rect x="1831.5" y="27.5" width="4.4" height="3" fill="none" stroke="#6c6c6e" stroke-width="1" rx="0" />
<rect x="1838.5" y="27.5" width="4.4" height="3" fill="none" stroke="#6c6c6e" stroke-width="1" rx="0" />
<rect x="1824.5" y="33.2" width="4.4" height="3" fill="none" stroke="#6c6c6e" stroke-width="1" rx="0" />
<rect x="1831.5" y="33.2" width="4.4" height="3" fill="none" stroke="#6c6c6e" stroke-width="1" rx="0" />
<rect x="1838.5" y="33.2" width="4.4" height="3" fill="none" stroke="#6c6c6e" stroke-width="1" rx="0" />
<rect x="1824.5" y="39" width="4.4" height="3" fill="none" stroke="#6c6c6e" stroke-width="1" rx="0" />
<rect x="1831.5" y="39" width="4.4" height="3" fill="none" stroke="#6c6c6e" stroke-width="1" rx="0" />
<rect x="1838.5" y="39" width="4.4" height="3" fill="none" stroke="#6c6c6e" stroke-width="1" rx="0" />
<path d="M49.3 62.199999999999996 L53.5 67.0 L57.7 62.199999999999996" fill="none" stroke="#7e7e80" stroke-width="1.3" stroke-linecap="round" stroke-linejoin="round"/>
<rect x="74.5" y="60.5" width="7.6" height="10" fill="#454547" rx="0" />
<rect x="85" y="60.5" width="7.6" height="10" fill="#8e8e8e" rx="0" />
<rect x="73.5" y="59.5" width="20.3" height="12" fill="none" stroke="#6a6a6c" stroke-width="1" rx="0" />
<line x1="83.5" y1="58" x2="83.5" y2="73" stroke="#cfcfcf" stroke-width="1" stroke-dasharray="1.2 1.2"/>
<rect x="108.7" y="59.5" width="20.3" height="12" fill="none" stroke="#6a6a6c" stroke-width="1" rx="0" />
<rect x="110.5" y="61.2" width="5" height="4.2" fill="#454547" rx="0" />
<rect x="116.4" y="61.2" width="5" height="4.2" fill="#454547" rx="0" />
<rect x="122.3" y="61.2" width="5" height="4.2" fill="#454547" rx="0" />
<rect x="110.5" y="66.3" width="5" height="4.2" fill="#454547" rx="0" />
<rect x="116.4" y="66.3" width="5" height="4.2" fill="#454547" rx="0" />
<rect x="122.3" y="66.3" width="5" height="4.2" fill="#454547" rx="0" />
<defs><pattern id="hat" width="2.4" height="2.4" patternUnits="userSpaceOnUse" patternTransform="rotate(-45)"><rect width="2.4" height="1.1" fill="#4a4a4c"/></pattern></defs>
<rect x="143" y="59.3" width="10.6" height="12.6" fill="url(#hat)" rx="0" />
<rect x="153.6" y="59.3" width="10.6" height="12.6" fill="#4a4a4c" rx="0" />
<path d="M153.6 59.8 A5.8 5.8 0 0 0 153.6 71.4 Z" fill="#212126" stroke="none" stroke-width="0" />
<path d="M153.6 59.8 A5.8 5.8 0 0 1 153.6 71.4 Z" fill="#8e8e8e" stroke="none" stroke-width="0" />
<circle cx="186" cy="62.9" r="2.1" fill="none" stroke="#505056" stroke-width="1" />
<path d="M614.0999999999999 62.199999999999996 L618.3 67.0 L622.5 62.199999999999996" fill="none" stroke="#7e7e80" stroke-width="1.3" stroke-linecap="round" stroke-linejoin="round"/>
<path d="M965.3 62.199999999999996 L969.5 67.0 L973.7 62.199999999999996" fill="none" stroke="#7e7e80" stroke-width="1.3" stroke-linecap="round" stroke-linejoin="round"/>
<rect x="992.3" y="57.6" width="17.6" height="10.8" fill="none" stroke="#e0e0e0" stroke-width="1.2" rx="1.6" />
<rect x="994" y="59.4" width="1.3" height="1.3" fill="#e0e0e0" rx="0" />
<rect x="994" y="62.4" width="1.3" height="1.3" fill="#e0e0e0" rx="0" />
<rect x="994" y="65.4" width="1.3" height="1.3" fill="#e0e0e0" rx="0" />
<rect x="1006.6" y="59.4" width="1.3" height="1.3" fill="#e0e0e0" rx="0" />
<rect x="996.8" y="63.8" width="15.4" height="6.8" fill="#b04cc6" rx="0.8" />
<text x="1004.5" y="69.4" font-size="6.2" font-weight="bold" fill="#fff" text-anchor="middle" letter-spacing="0.3">PXY</text>
<path d="M1019.4 62.199999999999996 L1023.6 67.0 L1027.8 62.199999999999996" fill="none" stroke="#7e7e80" stroke-width="1.3" stroke-linecap="round" stroke-linejoin="round"/>
<path d="M1052.94 60.05 A6.3 6.3 0 0 1 1057.63 56.95" fill="none" stroke="#e8553a" stroke-width="1.5" />
<path d="M1057.31 57.00 A6.3 6.3 0 0 1 1062.28 58.24" fill="none" stroke="#e84a8a" stroke-width="1.5" />
<path d="M1062.01 58.04 A6.3 6.3 0 0 1 1064.65 62.43" fill="none" stroke="#c050d8" stroke-width="1.5" />
<path d="M1064.60 62.11 A6.3 6.3 0 0 1 1063.36 67.08" fill="none" stroke="#4a78e8" stroke-width="1.5" />
<path d="M1063.56 66.81 A6.3 6.3 0 0 1 1059.17 69.45" fill="none" stroke="#3ac0c8" stroke-width="1.5" />
<path d="M1059.49 69.40 A6.3 6.3 0 0 1 1054.97 68.48" fill="none" stroke="#5ac850" stroke-width="1.5" />
<path d="M1049.8 59.6 Q1049.8 62 1052.2 62 Q1049.8 62 1049.8 64.4 Q1049.8 62 1047.3999999999999 62 Q1049.8 62 1049.8 59.6Z" fill="#ece36c" stroke="#ece36c" stroke-width="0.7" />
<path d="M1055.6 61.99999999999999 Q1055.6 64.6 1058.1999999999998 64.6 Q1055.6 64.6 1055.6 67.19999999999999 Q1055.6 64.6 1053.0 64.6 Q1055.6 64.6 1055.6 61.99999999999999Z" fill="#ece36c" stroke="#ece36c" stroke-width="0.7" />
<path d="M1051.4 66.6 Q1051.4 69 1053.8000000000002 69 Q1051.4 69 1051.4 71.4 Q1051.4 69 1049.0 69 Q1051.4 69 1051.4 66.6Z" fill="#ece36c" stroke="#ece36c" stroke-width="0.7" />
<path d="M1091.6 58.4 L1087.6 58.4 L1087.6 62.4 M1087.6 58.4 L1091.8 62.6" fill="none" stroke="#5c5c60" stroke-width="1.2" />
<path d="M1094.4 58.4 L1098.4 58.4 L1098.4 62.4 M1098.4 58.4 L1094.2 62.6" fill="none" stroke="#5c5c60" stroke-width="1.2" />
<path d="M1091.6 69.4 L1087.6 69.4 L1087.6 65.4 M1087.6 69.4 L1091.8 65.2" fill="none" stroke="#5c5c60" stroke-width="1.2" />
<path d="M1094.4 69.4 L1098.4 69.4 L1098.4 65.4 M1098.4 69.4 L1094.2 65.2" fill="none" stroke="#5c5c60" stroke-width="1.2" />
<circle cx="1123.2" cy="64.2" r="1.9" fill="#727276" stroke="none" stroke-width="1" />
<circle cx="1130" cy="64.2" r="1.9" fill="#727276" stroke="none" stroke-width="1" />
<circle cx="1136.8" cy="64.2" r="1.9" fill="#727276" stroke="none" stroke-width="1" />
<path d="M1162.6 57 L1162.6 69.2 L1165.6 66.6 L1167.8 71.4 L1169.8 70.4 L1167.6 65.8 L1171.6 65.6 Z" fill="#ffffff" stroke="#19191b" stroke-width="0.6" />
<path d="M1190.6 70.4 L1187.8 64.6 Q1187.4 63 1189 63.4 L1190.6 65.4 L1190 58.6 Q1190.8 57.2 1191.8 58.6 L1192.6 62.6 L1192.8 57 Q1193.8 55.6 1194.8 57 L1195 62.6 L1196.2 57.6 Q1197.4 56.4 1198 58 L1197.4 63 L1199.6 59.6 Q1201 59 1200.8 60.6 L1198.6 66.6 L1197.6 70.4 Z" fill="#6e6e70" stroke="none" stroke-width="0" />
<circle cx="1523.3" cy="64.3" r="3.4" fill="#ffffff" stroke="none" stroke-width="1" />
<circle cx="1542.7" cy="64.3" r="3.2" fill="#2e2e33" stroke="none" stroke-width="1" />
<path d="M1736.1 62.199999999999996 L1740.3 67.0 L1744.5 62.199999999999996" fill="none" stroke="#7e7e80" stroke-width="1.3" stroke-linecap="round" stroke-linejoin="round"/>
<line x1="1758" y1="64.3" x2="1870" y2="64.3" stroke="#161618" stroke-width="2" />
<circle cx="1758.3" cy="64.3" r="3.8" fill="#9a9a9a" stroke="none" stroke-width="1" />
<circle cx="1895" cy="64.2" r="1.9" fill="#727276" stroke="none" stroke-width="1" />
<circle cx="1901.8" cy="64.2" r="1.9" fill="#727276" stroke="none" stroke-width="1" />
<circle cx="1908.6" cy="64.2" r="1.9" fill="#727276" stroke="none" stroke-width="1" />
<line x1="1182.5" y1="77" x2="1182.5" y2="623" stroke="#24242a" stroke-width="1" />
<line x1="1233.5" y1="77" x2="1233.5" y2="623" stroke="#24242a" stroke-width="1" />
<line x1="1283.5" y1="77" x2="1283.5" y2="623" stroke="#24242a" stroke-width="1" />
<line x1="1333.5" y1="77" x2="1333.5" y2="623" stroke="#24242a" stroke-width="1" />
<line x1="1384.5" y1="77" x2="1384.5" y2="623" stroke="#24242a" stroke-width="1" />
<line x1="1434.5" y1="77" x2="1434.5" y2="623" stroke="#24242a" stroke-width="1" />
<line x1="1484.5" y1="77" x2="1484.5" y2="623" stroke="#24242a" stroke-width="1" />
<line x1="1535.5" y1="77" x2="1535.5" y2="623" stroke="#24242a" stroke-width="1" />
<line x1="1585.5" y1="77" x2="1585.5" y2="623" stroke="#24242a" stroke-width="1" />
<line x1="1635.5" y1="77" x2="1635.5" y2="623" stroke="#24242a" stroke-width="1" />
<line x1="1686.5" y1="77" x2="1686.5" y2="623" stroke="#24242a" stroke-width="1" />
<line x1="1736.5" y1="77" x2="1736.5" y2="623" stroke="#24242a" stroke-width="1" />
<line x1="1786.5" y1="77" x2="1786.5" y2="623" stroke="#24242a" stroke-width="1" />
<line x1="1837.5" y1="77" x2="1837.5" y2="623" stroke="#24242a" stroke-width="1" />
<line x1="1887.5" y1="77" x2="1887.5" y2="623" stroke="#24242a" stroke-width="1" />
<line x1="1149" y1="86.5" x2="1920" y2="86.5" stroke="#24242a" stroke-width="1" />
<line x1="1149" y1="119.5" x2="1920" y2="119.5" stroke="#24242a" stroke-width="1" />
<line x1="1149" y1="152.5" x2="1920" y2="152.5" stroke="#24242a" stroke-width="1" />
<line x1="1149" y1="185.5" x2="1920" y2="185.5" stroke="#24242a" stroke-width="1" />
<line x1="1149" y1="218.5" x2="1920" y2="218.5" stroke="#24242a" stroke-width="1" />
<line x1="1149" y1="251.5" x2="1920" y2="251.5" stroke="#24242a" stroke-width="1" />
<line x1="1149" y1="284.5" x2="1920" y2="284.5" stroke="#24242a" stroke-width="1" />
<line x1="1149" y1="317.5" x2="1920" y2="317.5" stroke="#24242a" stroke-width="1" />
<line x1="1149" y1="350.5" x2="1920" y2="350.5" stroke="#24242a" stroke-width="1" />
<line x1="1149" y1="383.5" x2="1920" y2="383.5" stroke="#24242a" stroke-width="1" />
<line x1="1149" y1="416.5" x2="1920" y2="416.5" stroke="#24242a" stroke-width="1" />
<line x1="1149" y1="449.5" x2="1920" y2="449.5" stroke="#24242a" stroke-width="1" />
<line x1="1149" y1="482.5" x2="1920" y2="482.5" stroke="#24242a" stroke-width="1" />
<line x1="1149" y1="515.5" x2="1920" y2="515.5" stroke="#24242a" stroke-width="1" />
<line x1="1149" y1="548.5" x2="1920" y2="548.5" stroke="#24242a" stroke-width="1" />
<line x1="1149" y1="580.5" x2="1920" y2="580.5" stroke="#24242a" stroke-width="1" />
<line x1="1149" y1="613.5" x2="1920" y2="613.5" stroke="#24242a" stroke-width="1" />
<line x1="1166" y1="356.2" x2="1443" y2="326.3" stroke="#88888c" stroke-width="1.7" />
<line x1="1524" y1="326.3" x2="1902" y2="356.2" stroke="#88888c" stroke-width="1.7" />
<rect x="1159.2" y="344.6" width="14.4" height="24" fill="#36363c" stroke="#070709" stroke-width="1.4" rx="3.4" />
<rect x="1895.4" y="344.6" width="14.4" height="24" fill="#36363c" stroke="#070709" stroke-width="1.4" rx="3.4" />
<circle cx="1166.3" cy="356.4" r="3.9" fill="#96d214" stroke="#0a1400" stroke-width="1" />
<circle cx="1902.5" cy="356.4" r="3.9" fill="#96d214" stroke="#0a1400" stroke-width="1" />
<defs><filter id="nsh" x="-30%" y="-30%" width="160%" height="170%"><feGaussianBlur stdDeviation="3"/></filter></defs>
<rect x="1452" y="312" width="64" height="60" fill="rgba(0,0,0,0.45)" rx="4" filter="url(#nsh)"/>
<rect x="1452.9" y="310.7" width="62.2" height="56" fill="#33333a" stroke="#c4443a" stroke-width="1.7" rx="3.4" />
<rect x="1454.6" y="312.4" width="58.8" height="52.6" fill="none" stroke="#1c1c20" stroke-width="0.8" rx="2.2" />
<rect x="1456.6" y="313.8" width="5.28" height="26.8" fill="#000000" rx="0" />
<rect x="1461.58" y="313.8" width="5.28" height="26.8" fill="#051a17" rx="0" />
<rect x="1466.56" y="313.8" width="5.28" height="26.8" fill="#20302c" rx="0" />
<rect x="1471.55" y="313.8" width="5.28" height="26.8" fill="#3d4642" rx="0" />
<rect x="1476.53" y="313.8" width="5.28" height="26.8" fill="#5a5f59" rx="0" />
<rect x="1481.51" y="313.8" width="5.28" height="26.8" fill="#75756f" rx="0" />
<rect x="1486.49" y="313.8" width="5.28" height="26.8" fill="#908c85" rx="0" />
<rect x="1491.47" y="313.8" width="5.28" height="26.8" fill="#aba19b" rx="0" />
<rect x="1496.45" y="313.8" width="5.28" height="26.8" fill="#c8b7af" rx="0" />
<rect x="1501.44" y="313.8" width="5.28" height="26.8" fill="#e2d0c7" rx="0" />
<rect x="1506.42" y="313.8" width="5.28" height="26.8" fill="#fde4dc" rx="0" />
<rect x="1456.6" y="343.7" width="54.8" height="2.4" fill="#7a9aca" rx="0" />
<text x="1464" y="359.8" font-size="11.2" fill="#e4e4e4">01</text>
<circle cx="1489" cy="356.2" r="4.9" fill="#f4f4f4" stroke="none" stroke-width="1" />
<text x="1486" y="359.2" font-size="7.6" font-style="italic" font-weight="bold" fill="#222" letter-spacing="-0.4">fx</text>
<path d="M1442.6 322.4 L1450 326.2 L1442.6 330 Z" fill="#98cc1e" stroke="#1a1a1c" stroke-width="0.6" />
<path d="M1442.6 346.7 L1450 350.6 L1442.6 354.6 Z" fill="#3cb6f2" stroke="#1a1a1c" stroke-width="0.6" />
<rect x="1517" y="322.5" width="7.4" height="7.6" fill="#98cc1e" stroke="#1a1a1c" stroke-width="0.6" rx="0" />
<rect x="1517" y="346.8" width="7.4" height="7.4" fill="#3cb6f2" stroke="#1a1a1c" stroke-width="0.6" rx="0" />
<line x1="23" y1="576.7" x2="1124.5" y2="576.7" stroke="#414146" stroke-width="1.8" />
<rect x="318" y="571.4" width="4.4" height="12" fill="#ffffff" stroke="#0c0c0e" stroke-width="1" rx="1" />
<path d="M23.2 612.6 L24.4 609.8 L31 603.2 L32.8 605 L26.2 611.6 Z" fill="#808082" stroke="none" stroke-width="0" />
<path d="M30.2 601.6 L31.4 600.4 L32.4 601.4 L34.6 598.6 Q36 597.4 37 598.6 Q38 599.8 37 601 L34.2 603.4 L35.2 604.4 L34 605.6 Z" fill="#808082" stroke="none" stroke-width="0" />
<path d="M47.3 603.2 L51.5 608.0 L55.7 603.2" fill="none" stroke="#7a7a7c" stroke-width="1.3" stroke-linecap="round" stroke-linejoin="round"/>
<path d="M76.2 597.8 L84 601.8 L76.2 605.8 L68.4 601.8 Z" fill="none" stroke="#e24a3c" stroke-width="1.3" stroke-linejoin="round"/>
<path d="M68.4 604.8 L76.2 608.8 L84 604.8" fill="none" stroke="#a83a30" stroke-width="1.2" stroke-linejoin="round"/>
<path d="M68.4 607.8 L76.2 611.8 L84 607.8" fill="none" stroke="#64282a" stroke-width="1.1" stroke-linejoin="round"/>
<path d="M100.8 602 L104 602 L109.8 598.6 L109.8 612.2 L104 608.8 L100.8 608.8 Z" fill="#ffffff" stroke="none" stroke-width="0" />
<path d="M111.6 602.4 Q114 605.4 111.6 608.4" fill="none" stroke="#dcdcdc" stroke-width="1.5" />
<path d="M113.8 599.6 Q118.6 605.4 113.8 611.2" fill="none" stroke="#a8a8a8" stroke-width="1.5" />
<rect x="462.9" y="598.8" width="2.1" height="13.200000000000045" fill="#8a8a8c" rx="0" />
<path d="M474 598.8 L465 605.4 L474 612Z M483.1 598.8 L474 605.4 L483.1 612Z" fill="#8a8a8c" stroke="none" stroke-width="0" />
<path d="M511.2 598.8 L500.9 605.4 L511.2 612Z" fill="#8a8a8c" stroke="none" stroke-width="0" />
<rect x="530.9" y="598.8" width="13.1" height="13.200000000000045" fill="#8a8a8c" rx="0" />
<path d="M563.8 598.8 L574 605.4 L563.8 612Z" fill="#8a8a8c" stroke="none" stroke-width="0" />
<path d="M591.9 598.8 L601 605.4 L591.9 612Z M601 598.8 L610 605.4 L601 612Z" fill="#8a8a8c" stroke="none" stroke-width="0" />
<rect x="610" y="598.8" width="2.1" height="13.200000000000045" fill="#8a8a8c" rx="0" />
<path d="M641 601.2 L635 601.2 Q630.4 601.2 630.4 606 Q630.4 611.2 635 611.2 L646 611.2 Q650.6 611.2 650.6 606 Q650.6 601.2 646 601.2 L640 601.2" fill="none" stroke="#e24a3c" stroke-width="2.1" stroke-linecap="round"/>
<path d="M640.4 597.6 L644.4 601.2 L640.4 604.8" fill="none" stroke="#e24a3c" stroke-width="2" stroke-linecap="round" stroke-linejoin="round"/>
<rect x="636.4" y="599.4" width="3.2" height="3.6" fill="#212126" rx="0" />
<path d="M20.4 644.6 L20.4 633.2 Q20.4 631.2 22.6 631.4 L33.4 633.4 Q35.4 633.8 35.4 635.8 L35.4 637" fill="none" stroke="#5e5e62" stroke-width="1.2" />
<path d="M24 631.6 L29 630.8 L36 632.4 L35.4 634" fill="none" stroke="#5e5e62" stroke-width="1" />
<path d="M29.6 634 L29.6 645.4 L32 646" fill="none" stroke="#5e5e62" stroke-width="1.1" />
<path d="M32.2 638.6 L41 635.2 Q42.8 634.8 42.9 636.6 L42.9 644.4 Q42.8 645.8 41.4 646.2 L33.6 648.6 Q32.2 648.8 32.2 647.4 Z" fill="none" stroke="#5e5e62" stroke-width="1.2" />
<ellipse cx="37.4" cy="641.6" rx="2.8" ry="3.6" fill="none" stroke="#5e5e62" stroke-width="1.1" transform="rotate(-14 37.4 641.6)"/>
<circle cx="21.6" cy="645.4" r="4.4" fill="#28282e" stroke="#5e5e62" stroke-width="2.2" stroke-dasharray="3.2 1.4"/>
<path d="M82.2 633.4 L79.2 633.4 L79.2 636.4" fill="none" stroke="#6c6c70" stroke-width="1.2" />
<path d="M96.6 633.4 L99.6 633.4 L99.6 636.4" fill="none" stroke="#6c6c70" stroke-width="1.2" />
<path d="M82.2 649.4 L79.2 649.4 L79.2 646.4" fill="none" stroke="#6c6c70" stroke-width="1.2" />
<path d="M96.6 649.4 L99.6 649.4 L99.6 646.4" fill="none" stroke="#6c6c70" stroke-width="1.2" />
<rect x="82" y="635.9" width="3.1" height="3.1" fill="#7a7a7c" rx="0" />
<rect x="86.1" y="635.9" width="3.1" height="3.1" fill="#5a5a5c" rx="0" />
<rect x="90.2" y="635.9" width="3.1" height="3.1" fill="#7a7a7c" rx="0" />
<rect x="94.3" y="635.9" width="3.1" height="3.1" fill="#6a6a6c" rx="0" />
<rect x="82" y="640" width="3.1" height="3.1" fill="#6a6a6c" rx="0" />
<rect x="86.1" y="640" width="3.1" height="3.1" fill="#7a7a7c" rx="0" />
<rect x="90.2" y="640" width="3.1" height="3.1" fill="#5a5a5c" rx="0" />
<rect x="94.3" y="640" width="3.1" height="3.1" fill="#7a7a7c" rx="0" />
<rect x="82" y="644.1" width="3.1" height="3.1" fill="#6a6a6c" rx="0" />
<rect x="86.1" y="644.1" width="3.1" height="3.1" fill="#6a6a6c" rx="0" />
<rect x="90.2" y="644.1" width="3.1" height="3.1" fill="#7a7a7c" rx="0" />
<rect x="94.3" y="644.1" width="3.1" height="3.1" fill="#4e4e50" rx="0" />
<circle cx="148.4" cy="640.6" r="8.8" fill="#3a3a3e" stroke="#ffffff" stroke-width="1.7" />
<line x1="141.5" y1="640.6" x2="155.3" y2="640.6" stroke="#5c5c60" stroke-width="0.9" />
<line x1="148.4" y1="633.7" x2="148.4" y2="647.5" stroke="#5c5c60" stroke-width="0.9" />
<circle cx="148.4" cy="640.6" r="2.6" fill="#ffffff" stroke="none" stroke-width="1" />
<path d="M204.2 649.3 A9 9 0 1 1 214.3 642.4" fill="none" stroke="#6a6a6e" stroke-width="1.3" />
<circle cx="205.5" cy="640.4" r="7" fill="#34343a" stroke="none" stroke-width="1" />
<line x1="198.5" y1="640.4" x2="212.5" y2="640.4" stroke="#505054" stroke-width="0.9" />
<line x1="205.5" y1="633.4" x2="205.5" y2="647.4" stroke="#505054" stroke-width="0.9" />
<circle cx="205.5" cy="640.4" r="2.5" fill="#7c7c80" stroke="none" stroke-width="1" />
<text x="205.6" y="650.6" font-size="7.6" fill="#86868a" textLength="16.6" lengthAdjust="spacingAndGlyphs">HDR</text>
<circle cx="270.9" cy="636.6" r="4" fill="#7a7a7c" stroke="none" stroke-width="1" />
<circle cx="265.8" cy="645" r="2.9" fill="none" stroke="#6e6e72" stroke-width="1.8" />
<circle cx="275.8" cy="645" r="3.9" fill="#4a4a4e" stroke="none" stroke-width="1" />
<path d="M265.2 634 Q260.4 634 260 640" fill="none" stroke="#6a6a6e" stroke-width="1.2" />
<path d="M257.8 637.8 L260 640.6 L262.4 637.8" fill="none" stroke="#6a6a6e" stroke-width="1.2" />
<rect x="321.6" y="634.6" width="20" height="14" fill="none" stroke="#6c6c70" stroke-width="1.3" rx="0" />
<circle cx="328.6" cy="638.6" r="1.4" fill="#7a7a7c" stroke="none" stroke-width="1" />
<path d="M324.6 646.6 L328.6 641.6 L332.2 646.6Z" fill="#646468" stroke="none" stroke-width="0" />
<path d="M331 646.6 L336 640 L340 646.6Z" fill="#4c4c50" stroke="none" stroke-width="0" />
<line x1="316.6" y1="638.5" x2="323.6" y2="638.5" stroke="#6c6c70" stroke-width="1" />
<line x1="316" y1="641.5" x2="325.6" y2="641.5" stroke="#6c6c70" stroke-width="1" />
<line x1="318.4" y1="644.5" x2="323.6" y2="644.5" stroke="#6c6c70" stroke-width="1" />
<rect x="322.4" y="637" width="2" height="9" fill="#28282e" rx="0" />
<line x1="321.6" y1="634.6" x2="321.6" y2="637" stroke="#6c6c70" stroke-width="1.3" />
<line x1="321.6" y1="646.2" x2="321.6" y2="648.6" stroke="#6c6c70" stroke-width="1.3" />
<line x1="690.4" y1="633.6" x2="690.4" y2="648.6" stroke="#4e4e52" stroke-width="0.9" />
<line x1="695.25" y1="633.6" x2="695.25" y2="648.6" stroke="#4e4e52" stroke-width="0.9" />
<line x1="700.1" y1="633.6" x2="700.1" y2="648.6" stroke="#4e4e52" stroke-width="0.9" />
<line x1="704.9499999999999" y1="633.6" x2="704.9499999999999" y2="648.6" stroke="#4e4e52" stroke-width="0.9" />
<line x1="709.8" y1="633.6" x2="709.8" y2="648.6" stroke="#4e4e52" stroke-width="0.9" />
<line x1="690.4" y1="633.6" x2="709.8" y2="633.6" stroke="#4e4e52" stroke-width="0.9" />
<line x1="690.4" y1="638.6" x2="709.8" y2="638.6" stroke="#4e4e52" stroke-width="0.9" />
<line x1="690.4" y1="643.6" x2="709.8" y2="643.6" stroke="#4e4e52" stroke-width="0.9" />
<line x1="690.4" y1="648.6" x2="709.8" y2="648.6" stroke="#4e4e52" stroke-width="0.9" />
<path d="M689.6 649.4 C700 648.6 700 633.4 711 632.6" fill="none" stroke="#707074" stroke-width="1.5" stroke-linecap="round"/>
<path d="M764 634.4 Q769.8 641 769.8 643.4 A5.8 5.2 0 0 1 758.2 643.4 Q758.2 641 764 634.4Z" fill="none" stroke="#6a6a6e" stroke-width="1.2" />
<circle cx="771.8" cy="636.4" r="0.9" fill="#6e6e72" stroke="none" stroke-width="1" />
<circle cx="775.0999999999999" cy="636.4" r="0.9" fill="#626266" stroke="none" stroke-width="1" />
<circle cx="778.4" cy="636.4" r="0.9" fill="#505054" stroke="none" stroke-width="1" />
<circle cx="781.6999999999999" cy="636.4" r="0.9" fill="#3e3e42" stroke="none" stroke-width="1" />
<circle cx="771.8" cy="639.9" r="0.9" fill="#6e6e72" stroke="none" stroke-width="1" />
<circle cx="775.0999999999999" cy="639.9" r="0.9" fill="#626266" stroke="none" stroke-width="1" />
<circle cx="778.4" cy="639.9" r="0.9" fill="#505054" stroke="none" stroke-width="1" />
<circle cx="781.6999999999999" cy="639.9" r="0.9" fill="#3e3e42" stroke="none" stroke-width="1" />
<circle cx="771.8" cy="643.4" r="0.9" fill="#6e6e72" stroke="none" stroke-width="1" />
<circle cx="775.0999999999999" cy="643.4" r="0.9" fill="#626266" stroke="none" stroke-width="1" />
<circle cx="778.4" cy="643.4" r="0.9" fill="#505054" stroke="none" stroke-width="1" />
<circle cx="781.6999999999999" cy="643.4" r="0.9" fill="#3e3e42" stroke="none" stroke-width="1" />
<circle cx="771.8" cy="646.9" r="0.9" fill="#6e6e72" stroke="none" stroke-width="1" />
<circle cx="775.0999999999999" cy="646.9" r="0.9" fill="#626266" stroke="none" stroke-width="1" />
<circle cx="778.4" cy="646.9" r="0.9" fill="#505054" stroke="none" stroke-width="1" />
<circle cx="781.6999999999999" cy="646.9" r="0.9" fill="#3e3e42" stroke="none" stroke-width="1" />
<path d="M829 641 L834.5 632 L845.2 632 L850.6 641 L845.2 650 L834.5 650Z" fill="none" stroke="#5a5a5e" stroke-width="1" />
<line x1="829" y1="641" x2="850.6" y2="641" stroke="#5a5a5e" stroke-width="0.9" />
<line x1="834.5" y1="632" x2="845.2" y2="650" stroke="#5a5a5e" stroke-width="0.9" />
<line x1="845.2" y1="632" x2="834.5" y2="650" stroke="#5a5a5e" stroke-width="0.9" />
<circle cx="829" cy="641" r="1" fill="#66666a" stroke="none" stroke-width="1" />
<circle cx="834.5" cy="632" r="1" fill="#66666a" stroke="none" stroke-width="1" />
<circle cx="845.2" cy="632" r="1" fill="#66666a" stroke="none" stroke-width="1" />
<circle cx="850.6" cy="641" r="1" fill="#66666a" stroke="none" stroke-width="1" />
<circle cx="845.2" cy="650" r="1" fill="#66666a" stroke="none" stroke-width="1" />
<circle cx="834.5" cy="650" r="1" fill="#66666a" stroke="none" stroke-width="1" />
<circle cx="839.8" cy="641" r="1" fill="#66666a" stroke="none" stroke-width="1" />
<circle cx="834.4" cy="641" r="1" fill="#66666a" stroke="none" stroke-width="1" />
<circle cx="845.2" cy="641" r="1" fill="#66666a" stroke="none" stroke-width="1" />
<path d="M901.4 650 L902.6 647 L910.4 639.2 L912.6 641.4 L904.8 649.2 Z" fill="#68686c" stroke="none" stroke-width="0" />
<path d="M909.4 637.4 L910.8 636 L912 637.2 L915 633.6 Q916.8 632 918.2 633.6 Q919.4 635.2 918 636.8 L914.4 639.8 L915.6 641 L914.2 642.4 Z" fill="#7c7c80" stroke="none" stroke-width="0" />
<ellipse cx="979.5" cy="641.3" rx="9.4" ry="7.4" fill="#3a3a3e" stroke="#6a6a6e" stroke-width="1.2"/>
<rect x="978.0" y="632.4" width="3" height="3" fill="#28282e" stroke="#7a7a7e" stroke-width="1" rx="0" />
<rect x="978.0" y="647.2" width="3" height="3" fill="#28282e" stroke="#7a7a7e" stroke-width="1" rx="0" />
<rect x="968.6" y="639.8" width="3" height="3" fill="#28282e" stroke="#7a7a7e" stroke-width="1" rx="0" />
<rect x="987.4" y="639.8" width="3" height="3" fill="#28282e" stroke="#7a7a7e" stroke-width="1" rx="0" />
<circle cx="1050.6" cy="641.3" r="5.2" fill="none" stroke="#68686c" stroke-width="1.4" />
<line x1="1050.6" y1="633" x2="1050.6" y2="638" stroke="#68686c" stroke-width="1.2" />
<line x1="1050.6" y1="644.6" x2="1050.6" y2="649.6" stroke="#68686c" stroke-width="1.2" />
<line x1="1042.4" y1="641.3" x2="1047.4" y2="641.3" stroke="#68686c" stroke-width="1.2" />
<line x1="1053.8" y1="641.3" x2="1058.8" y2="641.3" stroke="#68686c" stroke-width="1.2" />
<circle cx="1050.6" cy="641.3" r="0.8" fill="#68686c" stroke="none" stroke-width="1" />
<path d="M1043.1999999999998 633.2 L1039.6 633.2 L1039.6 636.8000000000001" fill="none" stroke="#545458" stroke-width="1" />
<path d="M1058.0 633.2 L1061.6 633.2 L1061.6 636.8000000000001" fill="none" stroke="#545458" stroke-width="1" />
<path d="M1043.1999999999998 649.6 L1039.6 649.6 L1039.6 646.0" fill="none" stroke="#545458" stroke-width="1" />
<path d="M1058.0 649.6 L1061.6 649.6 L1061.6 646.0" fill="none" stroke="#545458" stroke-width="1" />
<defs><pattern id="chk" width="4" height="4" patternUnits="userSpaceOnUse"><rect width="2" height="2" fill="#4c4c50"/><rect x="2" y="2" width="2" height="2" fill="#4c4c50"/></pattern></defs>
<rect x="1107" y="632" width="22" height="16" fill="url(#chk)" rx="0" />
<rect x="1112.4" y="636.4" width="20.2" height="14" fill="#28282e" rx="0" />
<rect x="1114" y="638" width="17" height="11" fill="url(#chk)" rx="0" />
<rect x="1112.4" y="636.4" width="20.2" height="14" fill="none" stroke="#6a6a6e" stroke-width="1.2" rx="0" />
<circle cx="1122.4" cy="640.6" r="2.1" fill="#77777b" stroke="none" stroke-width="1" />
<path d="M1117.4 648.6 Q1117.4 643.8 1122.4 643.8 Q1127.4 643.8 1127.4 648.6Z" fill="#77777b" stroke="none" stroke-width="0" />
<path d="M1184 632.6 Q1188.4 639 1188.4 641 A4.4 4.2 0 0 1 1179.6 641 Q1179.6 639 1184 632.6Z" fill="#707074" stroke="none" stroke-width="0" />
<circle cx="1183.4" cy="640.6" r="1.6" fill="#58585c" stroke="none" stroke-width="1" />
<path d="M1193.6 638.2 L1200 649.7 L1187 649.7Z" fill="#707074" stroke="none" stroke-width="0" />
<path d="M1194 642 L1197.4 648.4 L1194 648.4Z" fill="#5a5a5e" stroke="none" stroke-width="0" />
<defs><pattern id="chk2" width="3.6" height="3.6" patternUnits="userSpaceOnUse"><rect width="1.8" height="1.8" fill="#77777b"/><rect x="1.8" y="1.8" width="1.8" height="1.8" fill="#77777b"/></pattern></defs>
<rect x="1247" y="632.2" width="22" height="15.6" fill="url(#chk2)" rx="0" />
<rect x="1252" y="636" width="21" height="14.7" fill="#7e7e82" rx="0.8" />
<path d="M1252 636 L1269.6 636 L1256 650.7 L1252 650.7Z" fill="#ffffff" stroke="none" stroke-width="0" />
<circle cx="1262.5" cy="643.4" r="3.3" fill="#1a1a1c" stroke="none" stroke-width="1" />
<rect x="1320.4" y="633.6" width="19" height="15" fill="#3e3e42" stroke="#7a7a7e" stroke-width="1.2" rx="0" stroke-dasharray="1.2 1.2"/>
<rect x="1334" y="631.6" width="8" height="5" fill="#28282e" rx="0" />
<rect x="1317.6" y="645.6" width="8" height="5" fill="#28282e" rx="0" />
<path d="M1334.4 633.4 L1337 633.4 Q1340.2 633.4 1340.2 636.6 L1340.2 639" fill="none" stroke="#7a7a7e" stroke-width="1.3" />
<path d="M1337.6 637 L1340.2 639.8 L1342.8 637" fill="none" stroke="#7a7a7e" stroke-width="1.3" />
<path d="M1325.6 648.8 L1323 648.8 Q1319.8 648.8 1319.8 645.6 L1319.8 643.2" fill="none" stroke="#7a7a7e" stroke-width="1.3" />
<path d="M1317.2 645.2 L1319.8 642.4 L1322.4 645.2" fill="none" stroke="#7a7a7e" stroke-width="1.3" />
<rect x="1391.2" y="635.6" width="19.6" height="14" fill="none" stroke="#4a4a4e" stroke-width="1" rx="2" />
<rect x="1389.2" y="633.4" width="19.6" height="14" fill="#28282e" stroke="#6a6a6e" stroke-width="1.1" rx="2" />
<rect x="1391" y="635.2" width="16" height="10.4" fill="none" stroke="#6a6a6e" stroke-width="1" rx="1" />
<text x="1399" y="644.4" font-size="9.6" fill="#7a7a7e" text-anchor="middle">3D</text>
<path d="M1764.6 633.8 L1771.2 640.4 L1764.6 647 L1758 640.4Z" fill="none" stroke="#46464c" stroke-width="1" />
<path d="M1769.5 633.8 L1776.1 640.4 L1769.5 647 L1762.9 640.4Z" fill="#28282e" stroke="#58585e" stroke-width="1" />
<path d="M1774.5 633.8 L1781.1 640.4 L1774.5 647 L1767.9 640.4Z" fill="#68686c" stroke="#707074" stroke-width="0.8" />
<path d="M1824 645.6 L1825.4 636 L1827 643.6 L1829 636.4 L1830.8 642.6 L1832.4 640 L1834.2 636.4 L1836.4 645 L1838 640.6 L1839.4 642 L1839.4 646.6 L1823.2 646.6Z" fill="#77777b" stroke="none" stroke-width="0" />
<path d="M1823.6 644 L1825.4 634.8 L1827.2 642.6 L1829 635.4 L1831 641.8 L1832.6 638.8 L1834.2 635.4 L1836.4 644.2 L1838 639.6 L1839.2 641" fill="none" stroke="#ffffff" stroke-width="1.2" stroke-linejoin="round"/>
<path d="M1820.6 633 L1820.6 648.6 L1840 648.6" fill="none" stroke="#ffffff" stroke-width="1.4" />
<circle cx="1890" cy="640.9" r="8.6" fill="none" stroke="#6c6c70" stroke-width="1.3" />
<circle cx="1890" cy="636.6" r="1.2" fill="#77777b" stroke="none" stroke-width="1" />
<rect x="1889.1" y="639.2" width="1.9" height="6.4" fill="#77777b" rx="0.5" />
<circle cx="606.9" cy="672" r="7.4" fill="none" stroke="#ffffff" stroke-width="1.5" />
<circle cx="606.9" cy="672" r="1.6" fill="#ffffff" stroke="none" stroke-width="1" />
<line x1="606.9" y1="666" x2="606.9" y2="668.4" stroke="#6a6a6a" stroke-width="0.8" />
<line x1="606.9" y1="675.6" x2="606.9" y2="678" stroke="#6a6a6a" stroke-width="0.8" />
<line x1="600.9" y1="672" x2="603.3" y2="672" stroke="#6a6a6a" stroke-width="0.8" />
<line x1="610.5" y1="672" x2="612.9" y2="672" stroke="#6a6a6a" stroke-width="0.8" />
<line x1="629" y1="665.6" x2="629" y2="678.6" stroke="#505054" stroke-width="2" />
<line x1="629" y1="673.6" x2="629" y2="678.6" stroke="#78787c" stroke-width="2" />
<line x1="633.3" y1="665.6" x2="633.3" y2="678.6" stroke="#505054" stroke-width="2" />
<line x1="633.3" y1="670.6" x2="633.3" y2="678.6" stroke="#78787c" stroke-width="2" />
<line x1="637.6" y1="665.6" x2="637.6" y2="678.6" stroke="#505054" stroke-width="2" />
<line x1="637.6" y1="672.6" x2="637.6" y2="678.6" stroke="#78787c" stroke-width="2" />
<line x1="641.9" y1="665.6" x2="641.9" y2="678.6" stroke="#505054" stroke-width="2" />
<line x1="641.9" y1="674.6" x2="641.9" y2="678.6" stroke="#78787c" stroke-width="2" />
<path d="M660.6 679.4 A7.4 7.4 0 1 1 669.2 673.4" fill="none" stroke="#58585c" stroke-width="1.2" />
<circle cx="661.9" cy="672" r="1.3" fill="#6a6a6e" stroke="none" stroke-width="1" />
<text x="661" y="680.6" font-size="5.2" font-weight="bold" fill="#5e5e62" textLength="10.6" lengthAdjust="spacingAndGlyphs">LOG</text>
<path d="M695.04 671.17 A6.4 6.4 0 1 1 695.93 675.99" fill="none" stroke="#747478" stroke-width="1.2" />
<path d="M696.94 667.47 L694.84 671.27 L698.94 672.07" fill="none" stroke="#747478" stroke-width="1.2" stroke-linejoin="round"/>
<line x1="698.6999999999999" y1="672.5" x2="703.9" y2="672.5" stroke="#747478" stroke-width="1.1" />
<line x1="701.3" y1="669.9" x2="701.3" y2="675.1" stroke="#747478" stroke-width="1.1" />
<circle cx="23" cy="701.6" r="9.2" fill="none" stroke="#68686c" stroke-width="1.6" />
<text x="23" y="705.4" font-size="10.6" font-weight="bold" fill="#74747a" text-anchor="middle">A</text>
<path d="M49.4 709 L50.4 706.2 L57 699.6 L59 701.6 L52.4 708.2 Z" fill="#ffffff" stroke="none" stroke-width="0" />
<path d="M56 698 L57.4 696.6 L58.4 697.6 L61.2 694.6 Q62.8 693.4 64 694.8 Q65 696 63.8 697.4 L60.8 700 L61.8 701 L60.4 702.4 Z" fill="#ffffff" stroke="none" stroke-width="0" />
<path d="M50.6 694.4 Q52.8 697.6 52.8 698.8 A2.2 2.2 0 0 1 48.4 698.8 Q48.4 697.6 50.6 694.4Z" fill="#ffffff" stroke="none" stroke-width="0" />
<line x1="57.5" y1="804.5" x2="125.5" y2="804.5" stroke="rgba(190,190,190,0.55)" stroke-width="0.8" />
<line x1="91.5" y1="770.5" x2="91.5" y2="838.5" stroke="rgba(190,190,190,0.55)" stroke-width="0.8" />
<circle cx="91.5" cy="804.5" r="2.9" fill="#dadada" stroke="none" stroke-width="1" />
<path d="M150.94 739.39 A6.3 6.3 0 1 1 151.82 744.13" fill="none" stroke="#7c7c80" stroke-width="1.2" />
<path d="M152.84 735.69 L150.74 739.49 L154.84 740.29" fill="none" stroke="#7c7c80" stroke-width="1.2" stroke-linejoin="round"/>
<line x1="235.5" y1="804.5" x2="303.5" y2="804.5" stroke="rgba(190,190,190,0.55)" stroke-width="0.8" />
<line x1="269.5" y1="770.5" x2="269.5" y2="838.5" stroke="rgba(190,190,190,0.55)" stroke-width="0.8" />
<circle cx="269.5" cy="804.5" r="2.9" fill="#dadada" stroke="none" stroke-width="1" />
<path d="M328.94 739.39 A6.3 6.3 0 1 1 329.82 744.13" fill="none" stroke="#7c7c80" stroke-width="1.2" />
<path d="M330.84 735.69 L328.74 739.49 L332.84 740.29" fill="none" stroke="#7c7c80" stroke-width="1.2" stroke-linejoin="round"/>
<line x1="413.5" y1="804.5" x2="481.5" y2="804.5" stroke="rgba(190,190,190,0.55)" stroke-width="0.8" />
<line x1="447.5" y1="770.5" x2="447.5" y2="838.5" stroke="rgba(190,190,190,0.55)" stroke-width="0.8" />
<circle cx="447.5" cy="804.5" r="2.9" fill="#dadada" stroke="none" stroke-width="1" />
<path d="M506.94 739.39 A6.3 6.3 0 1 1 507.82 744.13" fill="none" stroke="#7c7c80" stroke-width="1.2" />
<path d="M508.84 735.69 L506.74 739.49 L510.84 740.29" fill="none" stroke="#7c7c80" stroke-width="1.2" stroke-linejoin="round"/>
<line x1="591.5" y1="804.5" x2="659.5" y2="804.5" stroke="rgba(190,190,190,0.55)" stroke-width="0.8" />
<line x1="625.5" y1="770.5" x2="625.5" y2="838.5" stroke="rgba(190,190,190,0.55)" stroke-width="0.8" />
<circle cx="625.5" cy="804.5" r="2.9" fill="#dadada" stroke="none" stroke-width="1" />
<path d="M684.94 739.39 A6.3 6.3 0 1 1 685.82 744.13" fill="none" stroke="#7c7c80" stroke-width="1.2" />
<path d="M686.84 735.69 L684.74 739.49 L688.84 740.29" fill="none" stroke="#7c7c80" stroke-width="1.2" stroke-linejoin="round"/>
<line x1="24.0" y1="740.5" x2="38.8" y2="740.5" stroke="#ffffff" stroke-width="1.2" />
<line x1="31.4" y1="733.1" x2="31.4" y2="747.9" stroke="#ffffff" stroke-width="1.2" />
<circle cx="31.4" cy="740.5" r="0.7" fill="#222" stroke="none" stroke-width="1" />
<circle cx="38.4" cy="746.5" r="2.9" fill="#050505" stroke="#28282e" stroke-width="0.8" />
<line x1="380.20000000000005" y1="740.5" x2="395.0" y2="740.5" stroke="#ffffff" stroke-width="1.2" />
<line x1="387.6" y1="733.1" x2="387.6" y2="747.9" stroke="#ffffff" stroke-width="1.2" />
<circle cx="387.6" cy="740.5" r="0.7" fill="#222" stroke="none" stroke-width="1" />
<circle cx="394.6" cy="746.5" r="2.9" fill="#ffffff" stroke="#28282e" stroke-width="0.8" />
<path d="M1415.04 671.17 A6.4 6.4 0 1 1 1415.93 675.99" fill="none" stroke="#747478" stroke-width="1.2" />
<path d="M1416.94 667.47 L1414.84 671.27 L1418.94 672.07" fill="none" stroke="#747478" stroke-width="1.2" stroke-linejoin="round"/>
<line x1="1418.7" y1="672.5" x2="1423.8999999999999" y2="672.5" stroke="#747478" stroke-width="1.1" />
<line x1="1421.3" y1="669.9" x2="1421.3" y2="675.1" stroke="#747478" stroke-width="1.1" />
<rect x="1368.9" y="690" width="17.4" height="17.4" fill="#ffffff" rx="0" />
<circle cx="1377.6000000000001" cy="698.7" r="4.5" fill="#222224" stroke="none" stroke-width="1" />
<rect x="1400" y="690" width="17.4" height="17.4" fill="#1a1a1c" rx="0" />
<rect x="1400" y="690.2" width="17.4" height="1.1" fill="#ffffff" rx="0" />
<rect x="1400" y="692.2" width="17.4" height="1.1" fill="#ffffff" rx="0" />
<rect x="1400" y="694.2" width="17.4" height="1.1" fill="#ffffff" rx="0" />
<rect x="1400" y="696.2" width="17.4" height="1.1" fill="#ffffff" rx="0" />
<rect x="1400" y="698.2" width="17.4" height="1.1" fill="#ffffff" rx="0" />
<rect x="1400" y="700.2" width="17.4" height="1.1" fill="#ffffff" rx="0" />
<rect x="1400" y="702.2" width="17.4" height="1.1" fill="#ffffff" rx="0" />
<rect x="1400" y="704.2" width="17.4" height="1.1" fill="#ffffff" rx="0" />
<rect x="1400" y="706.2" width="17.4" height="1.1" fill="#ffffff" rx="0" />
<ellipse cx="1408.7" cy="698.7" rx="6.9" ry="7.8" fill="#ffffff"/>
<rect x="1400.5" y="796.5" width="16.4" height="16.4" fill="#28282c" stroke="#5a5a5e" stroke-width="1" rx="0" />
<circle cx="1408.7" cy="804.7" r="3.8" fill="#8a8a8e" stroke="none" stroke-width="1" />
<rect x="1369.4" y="870.3" width="16.4" height="16.4" fill="#28282c" stroke="#5a5a5e" stroke-width="1" rx="0" />
<circle cx="1377.6000000000001" cy="878.5" r="3.8" fill="#8a8a8e" stroke="none" stroke-width="1" />
<rect x="1400" y="869.8" width="17.4" height="17.4" fill="#1a1a1c" rx="0" />
<rect x="1400" y="870.0" width="17.4" height="1.1" fill="#ffffff" rx="0" />
<rect x="1400" y="872.0" width="17.4" height="1.1" fill="#ffffff" rx="0" />
<rect x="1400" y="874.0" width="17.4" height="1.1" fill="#ffffff" rx="0" />
<rect x="1400" y="876.0" width="17.4" height="1.1" fill="#ffffff" rx="0" />
<rect x="1400" y="878.0" width="17.4" height="1.1" fill="#ffffff" rx="0" />
<rect x="1400" y="880.0" width="17.4" height="1.1" fill="#ffffff" rx="0" />
<rect x="1400" y="882.0" width="17.4" height="1.1" fill="#ffffff" rx="0" />
<rect x="1400" y="884.0" width="17.4" height="1.1" fill="#ffffff" rx="0" />
<rect x="1400" y="886.0" width="17.4" height="1.1" fill="#ffffff" rx="0" />
<ellipse cx="1408.7" cy="878.5" rx="6.9" ry="7.8" fill="#ffffff"/>
<path d="M1792.3999999999999 670.2 L1796.6 675.0 L1800.8 670.2" fill="none" stroke="#7e7e80" stroke-width="1.3" stroke-linecap="round" stroke-linejoin="round"/>
<line x1="1820" y1="667" x2="1835.4" y2="667" stroke="#6a6a6e" stroke-width="1.1" />
<circle cx="1832" cy="667" r="1.9" fill="#212126" stroke="#6a6a6e" stroke-width="1.1" />
<line x1="1820" y1="672.6" x2="1835.4" y2="672.6" stroke="#6a6a6e" stroke-width="1.1" />
<circle cx="1824" cy="672.6" r="1.9" fill="#212126" stroke="#6a6a6e" stroke-width="1.1" />
<line x1="1820" y1="678.2" x2="1835.4" y2="678.2" stroke="#6a6a6e" stroke-width="1.1" />
<circle cx="1830" cy="678.2" r="1.9" fill="#212126" stroke="#6a6a6e" stroke-width="1.1" />
<path d="M1863.6 667 L1859.6 667 L1859.6 671 M1859.6 667 L1863.8 671.2" fill="none" stroke="#5e5e62" stroke-width="1.2" />
<path d="M1866.2 667 L1870.2 667 L1870.2 671 M1870.2 667 L1866.0 671.2" fill="none" stroke="#5e5e62" stroke-width="1.2" />
<path d="M1863.6 678 L1859.6 678 L1859.6 674 M1859.6 678 L1863.8 673.8" fill="none" stroke="#5e5e62" stroke-width="1.2" />
<path d="M1866.2 678 L1870.2 678 L1870.2 674 M1870.2 678 L1866.0 673.8" fill="none" stroke="#5e5e62" stroke-width="1.2" />
<circle cx="1895" cy="672.4" r="1.9" fill="#727276" stroke="none" stroke-width="1" />
<circle cx="1901.8" cy="672.4" r="1.9" fill="#727276" stroke="none" stroke-width="1" />
<circle cx="1908.6" cy="672.4" r="1.9" fill="#727276" stroke="none" stroke-width="1" />
<line x1="1488" y1="693.5" x2="1913.4" y2="693.5" stroke="#6a5e38" stroke-width="1" />
<line x1="1488" y1="701.5" x2="1498" y2="701.5" stroke="#6a6040" stroke-width="1.2" />
<line x1="1488" y1="709.5" x2="1498" y2="709.5" stroke="#6a6040" stroke-width="1.2" />
<line x1="1488" y1="716.5" x2="1498" y2="716.5" stroke="#6a6040" stroke-width="1.2" />
<line x1="1488" y1="724.5" x2="1913.4" y2="724.5" stroke="#6a5e38" stroke-width="1" />
<line x1="1488" y1="732.5" x2="1498" y2="732.5" stroke="#6a6040" stroke-width="1.2" />
<line x1="1488" y1="740.5" x2="1498" y2="740.5" stroke="#6a6040" stroke-width="1.2" />
<line x1="1488" y1="747.5" x2="1498" y2="747.5" stroke="#6a6040" stroke-width="1.2" />
<line x1="1488" y1="755.5" x2="1913.4" y2="755.5" stroke="#6a5e38" stroke-width="1" />
<line x1="1488" y1="763.5" x2="1498" y2="763.5" stroke="#6a6040" stroke-width="1.2" />
<line x1="1488" y1="771.5" x2="1498" y2="771.5" stroke="#6a6040" stroke-width="1.2" />
<line x1="1488" y1="779.5" x2="1498" y2="779.5" stroke="#6a6040" stroke-width="1.2" />
<line x1="1488" y1="787.5" x2="1913.4" y2="787.5" stroke="#6a5e38" stroke-width="1" />
<line x1="1488" y1="795.5" x2="1498" y2="795.5" stroke="#6a6040" stroke-width="1.2" />
<line x1="1488" y1="803.5" x2="1498" y2="803.5" stroke="#6a6040" stroke-width="1.2" />
<line x1="1488" y1="810.5" x2="1498" y2="810.5" stroke="#6a6040" stroke-width="1.2" />
<line x1="1488" y1="818.5" x2="1913.4" y2="818.5" stroke="#6a5e38" stroke-width="1" />
<line x1="1488" y1="826.5" x2="1498" y2="826.5" stroke="#6a6040" stroke-width="1.2" />
<line x1="1488" y1="834.5" x2="1498" y2="834.5" stroke="#6a6040" stroke-width="1.2" />
<line x1="1488" y1="841.5" x2="1498" y2="841.5" stroke="#6a6040" stroke-width="1.2" />
<line x1="1488" y1="849.5" x2="1913.4" y2="849.5" stroke="#6a5e38" stroke-width="1" />
<line x1="1488" y1="857.5" x2="1498" y2="857.5" stroke="#6a6040" stroke-width="1.2" />
<line x1="1488" y1="865.5" x2="1498" y2="865.5" stroke="#6a6040" stroke-width="1.2" />
<line x1="1488" y1="872.5" x2="1498" y2="872.5" stroke="#6a6040" stroke-width="1.2" />
<line x1="1488" y1="880.5" x2="1913.4" y2="880.5" stroke="#6a5e38" stroke-width="1" />
<line x1="1488" y1="888.5" x2="1498" y2="888.5" stroke="#6a6040" stroke-width="1.2" />
<line x1="1488" y1="896.5" x2="1498" y2="896.5" stroke="#6a6040" stroke-width="1.2" />
<line x1="1488" y1="904.5" x2="1498" y2="904.5" stroke="#6a6040" stroke-width="1.2" />
<line x1="1488" y1="912.5" x2="1913.4" y2="912.5" stroke="#6a5e38" stroke-width="1" />
<line x1="1488" y1="920.5" x2="1498" y2="920.5" stroke="#6a6040" stroke-width="1.2" />
<line x1="1488" y1="927.5" x2="1498" y2="927.5" stroke="#6a6040" stroke-width="1.2" />
<line x1="1488" y1="935.5" x2="1498" y2="935.5" stroke="#6a6040" stroke-width="1.2" />
<line x1="1488" y1="942.5" x2="1913.4" y2="942.5" stroke="#4e4428" stroke-width="1" />
<line x1="1488.5" y1="942.5" x2="1488.5" y2="949.5" stroke="#6a5e38" stroke-width="1" />
<line x1="1497.5" y1="942.5" x2="1497.5" y2="947.0" stroke="#6a5e38" stroke-width="1" />
<line x1="1506.5" y1="942.5" x2="1506.5" y2="947.0" stroke="#6a5e38" stroke-width="1" />
<line x1="1515.5" y1="942.5" x2="1515.5" y2="947.0" stroke="#6a5e38" stroke-width="1" />
<line x1="1523.5" y1="942.5" x2="1523.5" y2="949.5" stroke="#6a5e38" stroke-width="1" />
<line x1="1532.5" y1="942.5" x2="1532.5" y2="947.0" stroke="#6a5e38" stroke-width="1" />
<line x1="1541.5" y1="942.5" x2="1541.5" y2="947.0" stroke="#6a5e38" stroke-width="1" />
<line x1="1550.5" y1="942.5" x2="1550.5" y2="947.0" stroke="#6a5e38" stroke-width="1" />
<line x1="1559.5" y1="942.5" x2="1559.5" y2="949.5" stroke="#6a5e38" stroke-width="1" />
<line x1="1568.5" y1="942.5" x2="1568.5" y2="947.0" stroke="#6a5e38" stroke-width="1" />
<line x1="1577.5" y1="942.5" x2="1577.5" y2="947.0" stroke="#6a5e38" stroke-width="1" />
<line x1="1585.5" y1="942.5" x2="1585.5" y2="947.0" stroke="#6a5e38" stroke-width="1" />
<line x1="1594.5" y1="942.5" x2="1594.5" y2="949.5" stroke="#6a5e38" stroke-width="1" />
<line x1="1603.5" y1="942.5" x2="1603.5" y2="947.0" stroke="#6a5e38" stroke-width="1" />
<line x1="1612.5" y1="942.5" x2="1612.5" y2="947.0" stroke="#6a5e38" stroke-width="1" />
<line x1="1621.5" y1="942.5" x2="1621.5" y2="947.0" stroke="#6a5e38" stroke-width="1" />
<line x1="1630.5" y1="942.5" x2="1630.5" y2="949.5" stroke="#6a5e38" stroke-width="1" />
<line x1="1639.5" y1="942.5" x2="1639.5" y2="947.0" stroke="#6a5e38" stroke-width="1" />
<line x1="1647.5" y1="942.5" x2="1647.5" y2="947.0" stroke="#6a5e38" stroke-width="1" />
<line x1="1656.5" y1="942.5" x2="1656.5" y2="947.0" stroke="#6a5e38" stroke-width="1" />
<line x1="1665.5" y1="942.5" x2="1665.5" y2="949.5" stroke="#6a5e38" stroke-width="1" />
<line x1="1674.5" y1="942.5" x2="1674.5" y2="947.0" stroke="#6a5e38" stroke-width="1" />
<line x1="1683.5" y1="942.5" x2="1683.5" y2="947.0" stroke="#6a5e38" stroke-width="1" />
<line x1="1692.5" y1="942.5" x2="1692.5" y2="947.0" stroke="#6a5e38" stroke-width="1" />
<line x1="1701.5" y1="942.5" x2="1701.5" y2="949.5" stroke="#6a5e38" stroke-width="1" />
<line x1="1709.5" y1="942.5" x2="1709.5" y2="947.0" stroke="#6a5e38" stroke-width="1" />
<line x1="1718.5" y1="942.5" x2="1718.5" y2="947.0" stroke="#6a5e38" stroke-width="1" />
<line x1="1727.5" y1="942.5" x2="1727.5" y2="947.0" stroke="#6a5e38" stroke-width="1" />
<line x1="1736.5" y1="942.5" x2="1736.5" y2="949.5" stroke="#6a5e38" stroke-width="1" />
<line x1="1745.5" y1="942.5" x2="1745.5" y2="947.0" stroke="#6a5e38" stroke-width="1" />
<line x1="1754.5" y1="942.5" x2="1754.5" y2="947.0" stroke="#6a5e38" stroke-width="1" />
<line x1="1762.5" y1="942.5" x2="1762.5" y2="947.0" stroke="#6a5e38" stroke-width="1" />
<line x1="1771.5" y1="942.5" x2="1771.5" y2="949.5" stroke="#6a5e38" stroke-width="1" />
<line x1="1780.5" y1="942.5" x2="1780.5" y2="947.0" stroke="#6a5e38" stroke-width="1" />
<line x1="1789.5" y1="942.5" x2="1789.5" y2="947.0" stroke="#6a5e38" stroke-width="1" />
<line x1="1798.5" y1="942.5" x2="1798.5" y2="947.0" stroke="#6a5e38" stroke-width="1" />
<line x1="1807.5" y1="942.5" x2="1807.5" y2="949.5" stroke="#6a5e38" stroke-width="1" />
<line x1="1816.5" y1="942.5" x2="1816.5" y2="947.0" stroke="#6a5e38" stroke-width="1" />
<line x1="1824.5" y1="942.5" x2="1824.5" y2="947.0" stroke="#6a5e38" stroke-width="1" />
<line x1="1833.5" y1="942.5" x2="1833.5" y2="947.0" stroke="#6a5e38" stroke-width="1" />
<line x1="1842.5" y1="942.5" x2="1842.5" y2="949.5" stroke="#6a5e38" stroke-width="1" />
<line x1="1851.5" y1="942.5" x2="1851.5" y2="947.0" stroke="#6a5e38" stroke-width="1" />
<line x1="1860.5" y1="942.5" x2="1860.5" y2="947.0" stroke="#6a5e38" stroke-width="1" />
<line x1="1869.5" y1="942.5" x2="1869.5" y2="947.0" stroke="#6a5e38" stroke-width="1" />
<line x1="1878.5" y1="942.5" x2="1878.5" y2="949.5" stroke="#6a5e38" stroke-width="1" />
<line x1="1886.5" y1="942.5" x2="1886.5" y2="947.0" stroke="#6a5e38" stroke-width="1" />
<line x1="1895.5" y1="942.5" x2="1895.5" y2="947.0" stroke="#6a5e38" stroke-width="1" />
<line x1="1904.5" y1="942.5" x2="1904.5" y2="947.0" stroke="#6a5e38" stroke-width="1" />
<line x1="1913.5" y1="942.5" x2="1913.5" y2="949.5" stroke="#6a5e38" stroke-width="1" />
<line x1="1700.5" y1="939.5" x2="1700.5" y2="943" stroke="#6a5e38" stroke-width="1" />
<line x1="1488.6" y1="940.5" x2="1527.2" y2="940.5" stroke="#f0f0f0" stroke-width="1.3" />
<line x1="1527.2" y1="918.8" x2="1527.2" y2="931" stroke="#ffffff" stroke-width="1" />
<line x1="1527.2" y1="918.5" x2="1565.7" y2="918.5" stroke="#c8c8c8" stroke-width="1.2" />
<line x1="1527.2" y1="921.4" x2="1565.7" y2="921.4" stroke="#909090" stroke-width="1" />
<line x1="1527.2" y1="938.5" x2="1565.7" y2="938.5" stroke="#909090" stroke-width="1" />
<line x1="1565.7" y1="907" x2="1565.7" y2="919.4" stroke="#909090" stroke-width="1" />
<line x1="1565.7" y1="924.7" x2="1565.7" y2="938.8" stroke="#909090" stroke-width="1" />
<line x1="1565.7" y1="895.3" x2="1604" y2="895.3" stroke="#5c5c5c" stroke-width="1" />
<line x1="1565.7" y1="899.5" x2="1604" y2="899.5" stroke="#909090" stroke-width="1" />
<line x1="1565.7" y1="911.5" x2="1604" y2="911.5" stroke="#ffffff" stroke-width="1.4" />
<line x1="1604" y1="873.3" x2="1642.9" y2="873.3" stroke="#3a3a3a" stroke-width="1" />
<line x1="1604" y1="878.6" x2="1642.9" y2="878.6" stroke="#c8c8c8" stroke-width="1" />
<line x1="1604" y1="884.6" x2="1642.9" y2="884.6" stroke="#5c5c5c" stroke-width="1" />
<line x1="1642.9" y1="852" x2="1642.9" y2="869.6" stroke="#ffffff" stroke-width="1" />
<line x1="1642.9" y1="852" x2="1681.5" y2="852" stroke="#5c5c5c" stroke-width="1" />
<line x1="1642.9" y1="856.4" x2="1681.5" y2="856.4" stroke="#909090" stroke-width="1" />
<line x1="1681.5" y1="840.6" x2="1681.5" y2="856.4" stroke="#5c5c5c" stroke-width="1" />
<line x1="1681.5" y1="829.4" x2="1720.1" y2="829.4" stroke="#ffffff" stroke-width="1.3" />
<line x1="1681.5" y1="835.4" x2="1720.1" y2="835.4" stroke="#909090" stroke-width="1" />
<line x1="1720.1" y1="802.4" x2="1758.7" y2="802.4" stroke="#c8c8c8" stroke-width="1" />
<line x1="1720.1" y1="807.1" x2="1758.7" y2="807.1" stroke="#ffffff" stroke-width="1.3" />
<line x1="1720.1" y1="813.4" x2="1758.7" y2="813.4" stroke="#909090" stroke-width="1" />
<line x1="1758.7" y1="775.4" x2="1758.7" y2="813.4" stroke="#909090" stroke-width="1" />
<line x1="1758.7" y1="775.4" x2="1797" y2="775.4" stroke="#909090" stroke-width="1" />
<line x1="1758.7" y1="785.4" x2="1797" y2="785.4" stroke="#ffffff" stroke-width="1.3" />
<line x1="1758.7" y1="792.8" x2="1797" y2="792.8" stroke="#c8c8c8" stroke-width="1" />
<line x1="1797" y1="747.5" x2="1835.9" y2="747.5" stroke="#3a3a3a" stroke-width="1" />
<line x1="1797" y1="763.5" x2="1835.9" y2="763.5" stroke="#ffffff" stroke-width="1.3" />
<line x1="1797" y1="770.2" x2="1835.9" y2="770.2" stroke="#5c5c5c" stroke-width="1" />
<line x1="1835.9" y1="720.6" x2="1835.9" y2="760" stroke="#3a3a3a" stroke-width="1" />
<line x1="1835.9" y1="720.5" x2="1874.8" y2="720.5" stroke="#ffffff" stroke-width="1.3" />
<line x1="1835.9" y1="741.2" x2="1874.8" y2="741.2" stroke="#5c5c5c" stroke-width="1" />
<line x1="1835.9" y1="749.2" x2="1874.8" y2="749.2" stroke="#ffffff" stroke-width="1.3" />
<line x1="1874.8" y1="693.4" x2="1874.8" y2="749.2" stroke="#909090" stroke-width="1" />
<line x1="1874.8" y1="730" x2="1874.8" y2="749.2" stroke="#ffffff" stroke-width="1" />
<line x1="1874.8" y1="708" x2="1874.8" y2="720.5" stroke="#ffffff" stroke-width="1" />
<line x1="1874.8" y1="693.3" x2="1913.1" y2="693.3" stroke="#b8a870" stroke-width="1" />
<line x1="1874.8" y1="719.9" x2="1913.1" y2="719.9" stroke="#5c5c5c" stroke-width="1" />
<line x1="1874.8" y1="727.6" x2="1913.1" y2="727.6" stroke="#5c5c5c" stroke-width="1" />
<ellipse cx="34.7" cy="976.6" rx="4.1" ry="4.4" fill="#ffffff"/>
<ellipse cx="30.4" cy="985.4" rx="4.1" ry="4.4" fill="#ffffff"/>
<ellipse cx="39.2" cy="985.4" rx="4.1" ry="4.4" fill="#ffffff"/>
<path d="M34.8 981.5 L34.8 989 M34.8 981.5 L28 977.5 M34.8 981.5 L41.6 977.5" fill="none" stroke="#19191b" stroke-width="1.5" />
<rect x="591.8" y="978.8" width="16.8" height="12" fill="none" stroke="#707072" stroke-width="1.2" rx="1.2" />
<line x1="593.6" y1="974.5" x2="606.6" y2="974.5" stroke="#444446" stroke-width="1" />
<line x1="592.6" y1="976.6" x2="607.8" y2="976.6" stroke="#707072" stroke-width="1" />
<circle cx="595.8" cy="982.4" r="1.2" fill="#707072" stroke="none" stroke-width="1" />
<path d="M593.4 988.6 L597.4 984.2 L600.6 987.2 L603.4 984.6 L607.4 988.6" fill="none" stroke="#707072" stroke-width="1.1" />
<path d="M716.8 975.2 L729.4 975.2 Q731.4 975.2 731 977 L729.4 985.4 Q729 987.2 727 987.2 L714.4 987.2 Q712.4 987.2 712.8 985.4 L714.4 977 Q714.8 975.2 716.8 975.2Z" fill="#2c2c2e" stroke="#707072" stroke-width="1.2" />
<line x1="722.6" y1="972.4" x2="720" y2="989" stroke="#19191b" stroke-width="3" />
<line x1="722.6" y1="972.4" x2="720" y2="989" stroke="#707072" stroke-width="1.2" />
<line x1="710.4" y1="977.4" x2="717" y2="977.4" stroke="#19191b" stroke-width="2.6" />
<line x1="710.4" y1="977.4" x2="717" y2="977.4" stroke="#707072" stroke-width="1.1" />
<line x1="706.8" y1="980.4" x2="716" y2="980.4" stroke="#19191b" stroke-width="2.6" />
<line x1="706.8" y1="980.4" x2="716" y2="980.4" stroke="#707072" stroke-width="1.1" />
<line x1="706.8" y1="983.6" x2="714.6" y2="983.6" stroke="#19191b" stroke-width="2.6" />
<line x1="706.8" y1="983.6" x2="714.6" y2="983.6" stroke="#707072" stroke-width="1.1" />
<circle cx="725" cy="978.2" r="0.7" fill="#707072" stroke="none" stroke-width="1" />
<circle cx="728.4" cy="978.2" r="0.7" fill="#707072" stroke="none" stroke-width="1" />
<circle cx="723.8" cy="984.4" r="0.7" fill="#707072" stroke="none" stroke-width="1" />
<circle cx="727.2" cy="984.4" r="0.7" fill="#707072" stroke="none" stroke-width="1" />
<line x1="840.2" y1="974" x2="840.2" y2="989" stroke="#707072" stroke-width="1.2" />
<circle cx="840.2" cy="973.8" r="1.3" fill="#19191b" stroke="#707072" stroke-width="1" />
<rect x="830.4" y="976.1999999999999" width="8.0" height="2.6" fill="#7a7a7c" rx="1.2" />
<rect x="842" y="976.1999999999999" width="6.2000000000000455" height="2.6" fill="#7a7a7c" rx="1.2" />
<rect x="829.4" y="980.8" width="9.0" height="2.6" fill="#7a7a7c" rx="1.2" />
<rect x="842" y="980.8" width="9" height="2.6" fill="#7a7a7c" rx="1.2" />
<rect x="831.2" y="985.5999999999999" width="7.199999999999932" height="2.6" fill="#7a7a7c" rx="1.2" />
<rect x="842" y="985.5999999999999" width="8.200000000000045" height="2.6" fill="#7a7a7c" rx="1.2" />
<line x1="968" y1="975.6" x2="961" y2="989" stroke="#7a7a7c" stroke-width="2.2" />
<path d="M955 974.8 Q955 977 957.2 977 Q955 977 955 979.2 Q955 977 952.8 977 Q955 977 955 974.8Z" fill="#58585a" stroke="#58585a" stroke-width="0.7" />
<path d="M960.4 972.6 Q960.4 974.4 962.1999999999999 974.4 Q960.4 974.4 960.4 976.1999999999999 Q960.4 974.4 958.6 974.4 Q960.4 974.4 960.4 972.6Z" fill="#58585a" stroke="#58585a" stroke-width="0.7" />
<path d="M959 980.0 Q959 981.6 960.6 981.6 Q959 981.6 959 983.2 Q959 981.6 957.4 981.6 Q959 981.6 959 980.0Z" fill="#58585a" stroke="#58585a" stroke-width="0.7" />
<circle cx="1082.03" cy="975.3" r="1.7" fill="#c864d8" stroke="none" stroke-width="1" />
<circle cx="1085.6" cy="978.87" r="1.7" fill="#7a78e8" stroke="none" stroke-width="1" />
<circle cx="1085.6" cy="983.93" r="1.7" fill="#4aa0e8" stroke="none" stroke-width="1" />
<circle cx="1082.03" cy="987.5" r="1.7" fill="#48c878" stroke="none" stroke-width="1" />
<circle cx="1076.97" cy="987.5" r="1.7" fill="#d8d840" stroke="none" stroke-width="1" />
<circle cx="1073.4" cy="983.93" r="1.7" fill="#e89a3c" stroke="none" stroke-width="1" />
<circle cx="1073.4" cy="978.87" r="1.7" fill="#e8604c" stroke="none" stroke-width="1" />
<circle cx="1076.97" cy="975.3" r="1.7" fill="#e85c9c" stroke="none" stroke-width="1" />
<circle cx="1079.5" cy="981.4" r="1.7" fill="#9a9a9a" stroke="none" stroke-width="1" />
<path d="M1197.4 986.6 L1197.4 977 L1205.4 975 L1205.4 984.6" fill="none" stroke="#8a8a8c" stroke-width="1.5" />
<path d="M1197.4 977 L1205.4 975 L1205.4 977.6 L1197.4 979.6Z" fill="#8a8a8c" stroke="none" stroke-width="0" />
<ellipse cx="1195.2" cy="986.8" rx="2.6" ry="2" fill="#8a8a8c"/>
<ellipse cx="1203.2" cy="984.8" rx="2.6" ry="2" fill="#8a8a8c"/>
<path d="M1326.4 974 Q1320 974 1316.4 979.6 L1314.6 983.4 L1317.8 986.6 L1321.6 984.6 Q1326.6 981 1326.4 974Z" fill="none" stroke="#78787a" stroke-width="1.2" />
<circle cx="1321.8" cy="978.8" r="1.3" fill="none" stroke="#78787a" stroke-width="1" />
<path d="M1316.4 979.6 L1312.6 980.4 L1311 983 L1314.6 983.4" fill="none" stroke="#78787a" stroke-width="1.1" />
<path d="M1321.6 984.6 L1321 988.2 L1318.4 989 L1317.8 986.6" fill="none" stroke="#78787a" stroke-width="1.1" />
<path d="M1313.8 986 L1311.4 989" fill="none" stroke="#78787a" stroke-width="1.1" />
<path d="M1836.5 976 L1844 983.8 L1842 983.8 L1842 989 L1838 989 L1838 985 L1835 985 L1835 989 L1831 989 L1831 983.8 L1829 983.8Z" fill="#8a8a8c" stroke="none" stroke-width="0" />
<path d="M1890.55 980.94 L1893.01 981.01 L1893.01 983.39 L1890.55 983.46 L1889.96 984.88 L1891.65 986.67 L1889.97 988.35 L1888.18 986.66 L1886.76 987.25 L1886.69 989.71 L1884.31 989.71 L1884.24 987.25 L1882.82 986.66 L1881.03 988.35 L1879.35 986.67 L1881.04 984.88 L1880.45 983.46 L1877.99 983.39 L1877.99 981.01 L1880.45 980.94 L1881.04 979.52 L1879.35 977.73 L1881.03 976.05 L1882.82 977.74 L1884.24 977.15 L1884.31 974.69 L1886.69 974.69 L1886.76 977.15 L1888.18 977.74 L1889.97 976.05 L1891.65 977.73 L1889.96 979.52 Z" fill="#8a8a8c" stroke="none" stroke-width="0" />
<circle cx="1885.5" cy="982.2" r="2.8" fill="#19191b" stroke="none" stroke-width="1" /></svg></body></html>
